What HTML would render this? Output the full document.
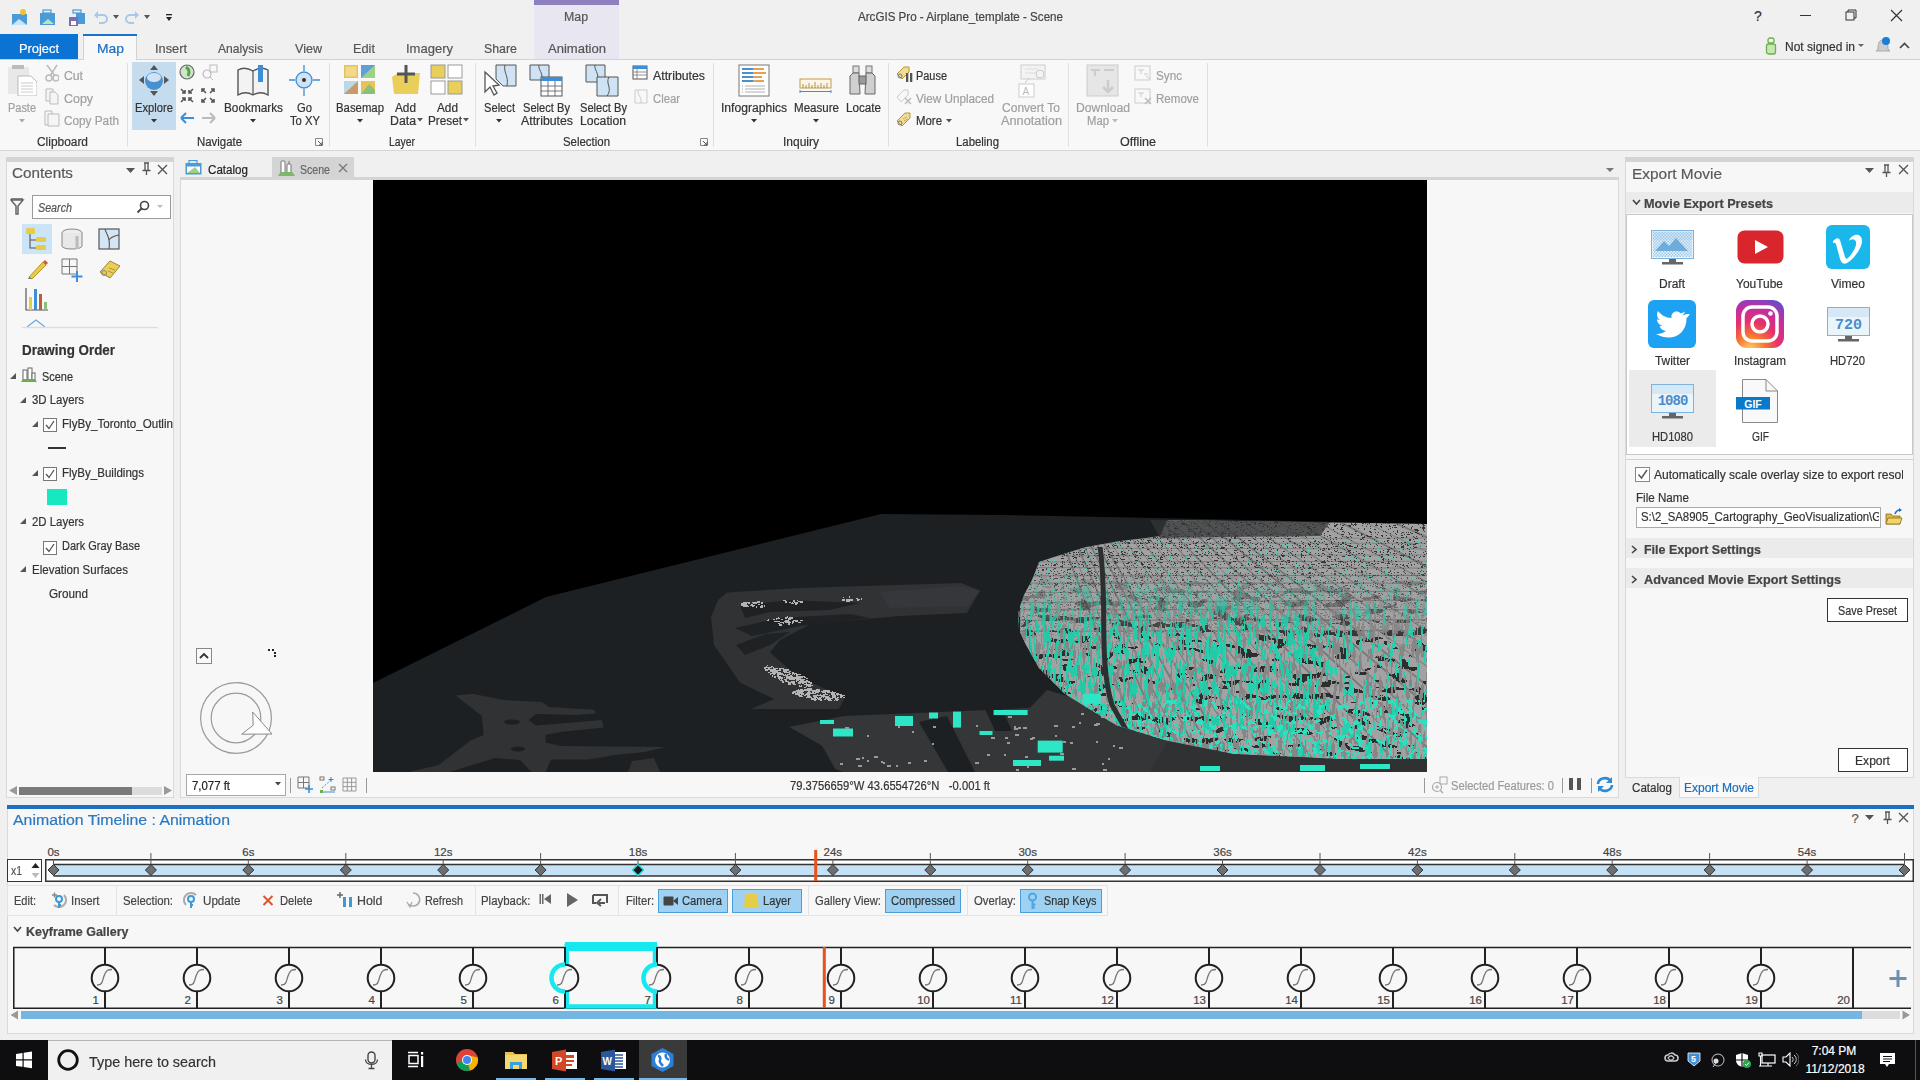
<!DOCTYPE html>
<html><head><meta charset="utf-8"><style>
html,body{margin:0;padding:0}
body{width:1920px;height:1080px;position:relative;overflow:hidden;background:#f0f0f0;font-family:"Liberation Sans",sans-serif;}
.t{position:absolute;white-space:nowrap;line-height:1;-webkit-text-stroke:0.2px currentColor;}
.r{position:absolute;}
</style></head><body>

<div class="r" style="left:0px;top:0px;width:1920px;height:59px;background:#f0f0f0;"></div>
<div class="r" style="left:534px;top:0px;width:85px;height:59px;background:#e8e6f0;"></div>
<div class="r" style="left:534px;top:0px;width:85px;height:5px;background:#8e7fbf;"></div>
<div class="t" style="left: 564px; top: 11.42px; font-size: 12.5px; color: rgb(85, 85, 85); font-weight: normal; transform-origin: 0px 0px; transform: scaleX(0.9865);">Map</div>
<div class="t" style="left: 858px; top: 10.84px; font-size: 12px; color: rgb(68, 68, 68); font-weight: normal; transform-origin: 0px 0px; transform: scaleX(0.9665);">ArcGIS Pro - Airplane_template - Scene</div>
<svg class="r" style="left:11px;top:8px;" width="18" height="18" viewBox="0 0 18 18"><rect x="1" y="6" width="15" height="11" fill="#4a9bd8"></rect><path d="M1 17 L8 11 L16 17Z" fill="#c9e4f5"></path><circle cx="12" cy="4" r="3" fill="#f2c12e"></circle></svg>
<svg class="r" style="left:39px;top:9px;" width="18" height="17" viewBox="0 0 18 17"><rect x="4" y="1" width="8" height="3" fill="none" stroke="#4a9bd8" stroke-width="1.2"></rect><rect x="1" y="4" width="15" height="12" fill="#4a9bd8"></rect><path d="M3 15 L9 10 L15 15Z" fill="#bfe3c0"></path></svg>
<svg class="r" style="left:68px;top:9px;" width="18" height="17" viewBox="0 0 18 17"><rect x="5" y="1" width="8" height="3" fill="none" stroke="#4a9bd8" stroke-width="1.2"></rect><rect x="8" y="4" width="9" height="11" fill="#4a9bd8"></rect><rect x="1" y="8" width="9" height="9" fill="#7b6fb3"></rect><rect x="3" y="12" width="5" height="4" fill="#fff"></rect></svg>
<svg class="r" style="left:93px;top:10px;" width="16" height="14" viewBox="0 0 16 14"><path d="M3 5 H10 A4 4 0 0 1 10 13 H6" fill="none" stroke="#a9c7e6" stroke-width="2"></path><path d="M1 5 L5 1 L5 9Z" fill="#a9c7e6"></path></svg>
<svg class="r" style="left:113px;top:15px;" width="7" height="5" viewBox="0 0 7 5"><path d="M0 0H6L3 4Z" fill="#555"></path></svg>
<svg class="r" style="left:124px;top:10px;" width="16" height="14" viewBox="0 0 16 14"><path d="M13 5 H6 A4 4 0 0 0 6 13 H10" fill="none" stroke="#a9c7e6" stroke-width="2"></path><path d="M15 5 L11 1 L11 9Z" fill="#a9c7e6"></path></svg>
<svg class="r" style="left:144px;top:15px;" width="7" height="5" viewBox="0 0 7 5"><path d="M0 0H6L3 4Z" fill="#555"></path></svg>
<svg class="r" style="left:165px;top:14px;" width="8" height="8" viewBox="0 0 8 8"><rect x="1" y="0" width="6" height="1.3" fill="#222"></rect><path d="M1 3H7L4 7Z" fill="#222"></path></svg>
<div class="t" style="left:1558px;width:400px;text-align:center;top:9.15px;font-size:14px;color:#333;font-weight:normal;">?</div>
<div class="r" style="left:1800px;top:15px;width:11px;height:1px;background:#333;"></div>
<svg class="r" style="left:1845px;top:9px;" width="12" height="12" viewBox="0 0 12 12"><rect x="1" y="3" width="8" height="8" fill="none" stroke="#333"></rect><path d="M3 3V1H11V9H9" fill="none" stroke="#333"></path></svg>
<svg class="r" style="left:1890px;top:9px;" width="13" height="13" viewBox="0 0 13 13"><path d="M1 1L12 12M12 1L1 12" stroke="#333" stroke-width="1.2"></path></svg>
<div class="r" style="left:0px;top:59px;width:1920px;height:1px;background:#d2d2d2;"></div>
<div class="r" style="left:0px;top:34px;width:78px;height:25px;background:#0b73d3;"></div>
<div class="t" style="left: 19px; top: 42px; font-size: 13px; color: rgb(255, 255, 255); font-weight: normal; transform-origin: 0px 0px; transform: scaleX(0.9884);">Project</div>
<div class="r" style="left:83px;top:34px;width:54px;height:26px;background:#f8f8f8;border-left:1px solid #d2d2d2;border-right:1px solid #d2d2d2;box-sizing:border-box"></div>
<div class="r" style="left:83px;top:34px;width:54px;height:2px;background:#1a73c8;"></div>
<div class="t" style="left: 97px; top: 42px; font-size: 13px; color: rgb(26, 111, 191); font-weight: normal; transform-origin: 0px 0px; transform: scaleX(1.0673);">Map</div>
<div class="t" style="left: 155px; top: 42px; font-size: 13px; color: rgb(85, 85, 85); font-weight: normal; transform-origin: 0px 0px; transform: scaleX(0.9841);">Insert</div>
<div class="t" style="left: 218px; top: 42px; font-size: 13px; color: rgb(85, 85, 85); font-weight: normal; transform-origin: 0px 0px; transform: scaleX(0.9293);">Analysis</div>
<div class="t" style="left: 295px; top: 42px; font-size: 13px; color: rgb(85, 85, 85); font-weight: normal; transform-origin: 0px 0px; transform: scaleX(0.9659);">View</div>
<div class="t" style="left: 353px; top: 42px; font-size: 13px; color: rgb(85, 85, 85); font-weight: normal; transform-origin: 0px 0px; transform: scaleX(0.9819);">Edit</div>
<div class="t" style="left: 406px; top: 42px; font-size: 13px; color: rgb(85, 85, 85); font-weight: normal; transform-origin: 0px 0px; transform: scaleX(1.0007);">Imagery</div>
<div class="t" style="left: 484px; top: 42px; font-size: 13px; color: rgb(85, 85, 85); font-weight: normal; transform-origin: 0px 0px; transform: scaleX(0.9509);">Share</div>
<div class="t" style="left: 548px; top: 42px; font-size: 13px; color: rgb(85, 85, 85); font-weight: normal; transform-origin: 0px 0px; transform: scaleX(1.0032);">Animation</div>
<svg class="r" style="left:1765px;top:37px;" width="13" height="18" viewBox="0 0 13 18"><rect x="3" y="1" width="6" height="5" rx="2" fill="none" stroke="#6ab04c" stroke-width="1.3"></rect><rect x="1.5" y="7" width="9" height="10" rx="2" fill="#c8e6b4" stroke="#6ab04c" stroke-width="1.3"></rect></svg>
<div class="t" style="left: 1785px; top: 41.42px; font-size: 12.5px; color: rgb(51, 51, 51); font-weight: normal; transform-origin: 0px 0px; transform: scaleX(0.9593);">Not signed in</div>
<svg class="r" style="left:1858px;top:44px;" width="7" height="4" viewBox="0 0 7 4"><path d="M0 0H6L3 3Z" fill="#666"></path></svg>
<svg class="r" style="left:1874px;top:36px;" width="18" height="18" viewBox="0 0 18 18"><path d="M4 13 C4 6 6 4 9 4 C12 4 14 6 14 13 L16 15 H2Z" fill="#ccc" stroke="#aaa"></path><circle cx="12" cy="5" r="4" fill="#1a7fd4"></circle></svg>
<svg class="r" style="left:1899px;top:42px;" width="11" height="7" viewBox="0 0 11 7"><path d="M1 6 L5.5 1.5 L10 6" fill="none" stroke="#444" stroke-width="1.6"></path></svg>
<div class="r" style="left:0px;top:60px;width:1920px;height:90px;background:#f8f8f8;"></div>
<div class="r" style="left:0px;top:150px;width:1920px;height:1px;background:#d6d6d6;"></div>
<div class="r" style="left:127px;top:63px;width:1px;height:84px;background:#e0e0e0;"></div>
<div class="r" style="left:329px;top:63px;width:1px;height:84px;background:#e0e0e0;"></div>
<div class="r" style="left:475px;top:63px;width:1px;height:84px;background:#e0e0e0;"></div>
<div class="r" style="left:713px;top:63px;width:1px;height:84px;background:#e0e0e0;"></div>
<div class="r" style="left:888px;top:63px;width:1px;height:84px;background:#e0e0e0;"></div>
<div class="r" style="left:1068px;top:63px;width:1px;height:84px;background:#e0e0e0;"></div>
<div class="r" style="left:1207px;top:63px;width:1px;height:84px;background:#e0e0e0;"></div>
<div class="t" style="left: 37px; top: 136.34px; font-size: 12px; color: rgb(51, 51, 51); font-weight: normal; transform-origin: 0px 0px; transform: scaleX(0.9927);">Clipboard</div>
<div class="t" style="left: 197px; top: 136.34px; font-size: 12px; color: rgb(51, 51, 51); font-weight: normal; transform-origin: 0px 0px; transform: scaleX(0.9499);">Navigate</div>
<div class="t" style="left: 389px; top: 136.34px; font-size: 12px; color: rgb(51, 51, 51); font-weight: normal; transform-origin: 0px 0px; transform: scaleX(0.8658);">Layer</div>
<div class="t" style="left: 563px; top: 136.34px; font-size: 12px; color: rgb(51, 51, 51); font-weight: normal; transform-origin: 0px 0px; transform: scaleX(0.9519);">Selection</div>
<div class="t" style="left: 783px; top: 136.34px; font-size: 12px; color: rgb(51, 51, 51); font-weight: normal; transform-origin: 0px 0px; transform: scaleX(0.9991);">Inquiry</div>
<div class="t" style="left: 956px; top: 136.34px; font-size: 12px; color: rgb(51, 51, 51); font-weight: normal; transform-origin: 0px 0px; transform: scaleX(0.9477);">Labeling</div>
<div class="t" style="left: 1120px; top: 136.34px; font-size: 12px; color: rgb(51, 51, 51); font-weight: normal; transform-origin: 0px 0px; transform: scaleX(1.0444);">Offline</div>
<svg class="r" style="left:315px;top:138px;" width="8" height="8" viewBox="0 0 8 8"><path d="M0.5 0.5H7.5V7.5H0.5Z" fill="none" stroke="#888"></path><path d="M3 3L7 7M4 7H7V4" stroke="#555" fill="none"></path></svg>
<svg class="r" style="left:700px;top:138px;" width="8" height="8" viewBox="0 0 8 8"><path d="M0.5 0.5H7.5V7.5H0.5Z" fill="none" stroke="#888"></path><path d="M3 3L7 7M4 7H7V4" stroke="#555" fill="none"></path></svg>
<svg class="r" style="left:7px;top:64px;" width="30" height="32" viewBox="0 0 30 32"><rect x="1" y="3" width="21" height="27" fill="#e8e8e8"></rect><rect x="5" y="1" width="12" height="4" fill="#bbb"></rect><path d="M11 12H24L30 18V32H11Z" fill="#fff" stroke="#bbb"></path><path d="M14 19H26M14 22H26M14 25H26M14 28H26" stroke="#ccc"></path></svg>
<div class="t" style="left: 8px; top: 101.84px; font-size: 12px; color: rgb(160, 160, 160); font-weight: normal; transform-origin: 0px 0px; transform: scaleX(0.9124);">Paste</div>
<svg class="r" style="left:19px;top:119px;" width="7" height="4" viewBox="0 0 7 4"><path d="M0 0H6L3 3.5Z" fill="#aaa"></path></svg>
<svg class="r" style="left:45px;top:64px;" width="14" height="18" viewBox="0 0 14 18"><circle cx="4" cy="14" r="3" fill="none" stroke="#bbb" stroke-width="1.5"></circle><circle cx="11" cy="14" r="3" fill="none" stroke="#bbb" stroke-width="1.5"></circle><path d="M2 1 L10 12 M12 1 L5 12" stroke="#bbb" stroke-width="1.5"></path></svg>
<div class="t" style="left: 64px; top: 69.84px; font-size: 12px; color: rgb(160, 160, 160); font-weight: normal; transform-origin: 0px 0px; transform: scaleX(1.0167);">Cut</div>
<svg class="r" style="left:45px;top:88px;" width="14" height="17" viewBox="0 0 14 17"><path d="M1 1H8V13H1Z" fill="#f5f5f5" stroke="#bbb"></path><path d="M5 4H10L13 7V16H5Z" fill="#f5f5f5" stroke="#bbb"></path></svg>
<div class="t" style="left: 64px; top: 92.84px; font-size: 12px; color: rgb(160, 160, 160); font-weight: normal; transform-origin: 0px 0px; transform: scaleX(1.0351);">Copy</div>
<svg class="r" style="left:44px;top:110px;" width="16" height="17" viewBox="0 0 16 17"><path d="M1 1H8V15H1Z" fill="#f5f5f5" stroke="#bbb"></path><path d="M4 4H15V16H4Z" fill="#f5f5f5" stroke="#bbb"></path></svg>
<div class="t" style="left: 64px; top: 114.84px; font-size: 12px; color: rgb(160, 160, 160); font-weight: normal; transform-origin: 0px 0px; transform: scaleX(0.9813);">Copy Path</div>
<div class="r" style="left:132px;top:62px;width:44px;height:68px;background:#c5dcef;"></div>
<svg class="r" style="left:138px;top:64px;" width="32" height="33" viewBox="0 0 32 33"><path d="M16 1L20 6H12Z M16 32L20 27H12Z M1 16L6 12V20Z M31 16L26 12V20Z" fill="#555"></path><ellipse cx="16" cy="17" rx="9" ry="9" fill="#4a90d0"></ellipse><ellipse cx="16" cy="13.5" rx="7" ry="4.5" fill="#cfe3f5"></ellipse></svg>
<div class="t" style="left: 135px; top: 101.84px; font-size: 12px; color: rgb(51, 51, 51); font-weight: normal; transform-origin: 0px 0px; transform: scaleX(0.9339);">Explore</div>
<svg class="r" style="left:151px;top:119px;" width="7" height="4" viewBox="0 0 7 4"><path d="M0 0H6L3 3.5Z" fill="#333"></path></svg>
<svg class="r" style="left:179px;top:64px;" width="18" height="17" viewBox="0 0 18 17"><circle cx="8" cy="8" r="7" fill="#cde8c8" stroke="#666" stroke-width="1.2"></circle><path d="M7 3 C10 5 11 8 9 12" stroke="#5aa04a" stroke-width="3" fill="none"></path></svg>
<svg class="r" style="left:200px;top:64px;" width="18" height="17" viewBox="0 0 18 17"><circle cx="7" cy="10" r="4" fill="none" stroke="#bbb" stroke-width="1.2"></circle><path d="M10 13L13 16" stroke="#bbb"></path><rect x="10" y="1" width="7" height="7" fill="none" stroke="#bbb"></rect></svg>
<svg class="r" style="left:179px;top:87px;" width="40" height="17" viewBox="0 0 40 17"><path d="M2 2L6 6M6 3V6H3 M14 2L10 6M10 3V6H13 M2 15L6 11M3 11H6V14 M14 15L10 11M13 11H10V14" stroke="#555" stroke-width="1.6" fill="none"></path><g transform="translate(21,0)"><path d="M6 6L2 2M2 5V2H5 M10 6L14 2M11 2H14V5 M6 11L2 15M2 12V15H5 M10 11L14 15M14 12V15H11" stroke="#555" stroke-width="1.6" fill="none"></path></g></svg>
<svg class="r" style="left:179px;top:111px;" width="40" height="14" viewBox="0 0 40 14"><path d="M2 7H15M2 7L7 2M2 7L7 12" stroke="#3c8fd6" stroke-width="2" fill="none"></path><path d="M23 7H36M36 7L31 2M36 7L31 12" stroke="#bbb" stroke-width="2" fill="none"></path></svg>
<svg class="r" style="left:236px;top:64px;" width="34" height="32" viewBox="0 0 34 32"><path d="M2 6 C7 3 12 4 17 7 C22 4 27 3 32 6 V31 C27 28 22 28 17 31 C12 28 7 28 2 31Z" fill="#f3f3f3" stroke="#555" stroke-width="1.4"></path><path d="M17 7V31" stroke="#555" stroke-width="1.2"></path><rect x="22" y="1" width="5" height="17" fill="#3c8fd6"></rect></svg>
<div class="t" style="left: 224px; top: 101.84px; font-size: 12px; color: rgb(51, 51, 51); font-weight: normal; transform-origin: 0px 0px; transform: scaleX(0.9828);">Bookmarks</div>
<svg class="r" style="left:250px;top:119px;" width="7" height="4" viewBox="0 0 7 4"><path d="M0 0H6L3 3.5Z" fill="#333"></path></svg>
<svg class="r" style="left:288px;top:64px;" width="33" height="33" viewBox="0 0 33 33"><circle cx="16" cy="16" r="8" fill="#cfe3f5" stroke="#3c8fd6" stroke-width="1.3"></circle><circle cx="16" cy="16" r="2" fill="#333"></circle><path d="M16 1V7M16 25V32M1 16H7M25 16H32" stroke="#3c8fd6" stroke-width="1.3"></path></svg>
<div class="t" style="left: 297px; top: 101.84px; font-size: 12px; color: rgb(51, 51, 51); font-weight: normal; transform-origin: 0px 0px; transform: scaleX(0.9366);">Go</div>
<div class="t" style="left: 290px; top: 114.84px; font-size: 12px; color: rgb(51, 51, 51); font-weight: normal; transform-origin: 0px 0px; transform: scaleX(0.937);">To XY</div>
<svg class="r" style="left:343px;top:64px;" width="34" height="32" viewBox="0 0 34 32"><rect x="1" y="1" width="14" height="13" fill="#e6c25c"></rect><rect x="2.5" y="2.5" width="11" height="10" fill="#f2d98a"></rect><rect x="18" y="1" width="14" height="13" fill="#5e9fd6"></rect><path d="M18 14 L32 1 V14Z" fill="#9fd08a"></path><rect x="1" y="17" width="14" height="13" fill="#c89a6a"></rect><path d="M1 17H15L1 30Z" fill="#b9d8e8"></path><rect x="18" y="17" width="14" height="13" fill="#e7c35a"></rect><path d="M18 30 L26 20 L32 26 V30Z" fill="#8cc07a"></path></svg>
<div class="t" style="left: 336px; top: 101.84px; font-size: 12px; color: rgb(51, 51, 51); font-weight: normal; transform-origin: 0px 0px; transform: scaleX(0.9467);">Basemap</div>
<svg class="r" style="left:357px;top:119px;" width="7" height="4" viewBox="0 0 7 4"><path d="M0 0H6L3 3.5Z" fill="#333"></path></svg>
<svg class="r" style="left:390px;top:64px;" width="32" height="32" viewBox="0 0 32 32"><path d="M2 13 L8 9 H30 L28 30 H4Z" fill="#e9cf5a"></path><path d="M16 1V19M7 10H25" stroke="#555" stroke-width="3"></path></svg>
<div class="t" style="left: 395px; top: 101.84px; font-size: 12px; color: rgb(51, 51, 51); font-weight: normal; transform-origin: 0px 0px; transform: scaleX(0.9832);">Add</div>
<div class="t" style="left: 390px; top: 114.84px; font-size: 12px; color: rgb(51, 51, 51); font-weight: normal; transform-origin: 0px 0px; transform: scaleX(1.0253);">Data</div>
<svg class="r" style="left:417px;top:118px;" width="7" height="4" viewBox="0 0 7 4"><path d="M0 0H6L3 3.5Z" fill="#555"></path></svg>
<svg class="r" style="left:430px;top:64px;" width="34" height="32" viewBox="0 0 34 32"><rect x="1" y="1" width="14" height="13" fill="#e9cf5a" stroke="#999"></rect><rect x="18" y="1" width="14" height="13" fill="#fff" stroke="#999"></rect><rect x="1" y="17" width="14" height="13" fill="#fff" stroke="#999"></rect><rect x="18" y="17" width="14" height="13" fill="#e9cf5a" stroke="#999"></rect></svg>
<div class="t" style="left: 437px; top: 101.84px; font-size: 12px; color: rgb(51, 51, 51); font-weight: normal; transform-origin: 0px 0px; transform: scaleX(0.9832);">Add</div>
<div class="t" style="left: 428px; top: 114.84px; font-size: 12px; color: rgb(51, 51, 51); font-weight: normal; transform-origin: 0px 0px; transform: scaleX(0.9802);">Preset</div>
<svg class="r" style="left:463px;top:118px;" width="7" height="4" viewBox="0 0 7 4"><path d="M0 0H6L3 3.5Z" fill="#555"></path></svg>
<svg class="r" style="left:483px;top:64px;" width="34" height="33" viewBox="0 0 34 33"><path d="M13 1H33V22H20 L13 15Z" fill="#cfe3f5" stroke="#555"></path><path d="M22 1 C20 8 26 12 24 22" stroke="#555" fill="none"></path><path d="M2 8 L2 28 L7 23 L11 31 L14 29 L10 22 L16 21Z" fill="#fff" stroke="#555" stroke-width="1.3"></path></svg>
<div class="t" style="left: 484px; top: 101.84px; font-size: 12px; color: rgb(51, 51, 51); font-weight: normal; transform-origin: 0px 0px; transform: scaleX(0.9293);">Select</div>
<svg class="r" style="left:496px;top:119px;" width="7" height="4" viewBox="0 0 7 4"><path d="M0 0H6L3 3.5Z" fill="#333"></path></svg>
<svg class="r" style="left:529px;top:64px;" width="34" height="33" viewBox="0 0 34 33"><path d="M1 1H20V16H1Z" fill="#cfe3f5" stroke="#555"></path><path d="M10 1 C9 6 14 8 13 16" stroke="#555" fill="none"></path><rect x="12" y="13" width="21" height="19" fill="#fff" stroke="#555"></rect><rect x="12" y="13" width="21" height="4" fill="#3c8fd6"></rect><path d="M12 22H33M12 27H33M19 17V32M26 17V32" stroke="#555" stroke-width="0.8"></path></svg>
<div class="t" style="left: 523px; top: 101.84px; font-size: 12px; color: rgb(51, 51, 51); font-weight: normal; transform-origin: 0px 0px; transform: scaleX(0.927);">Select By</div>
<div class="t" style="left: 521px; top: 114.84px; font-size: 12px; color: rgb(51, 51, 51); font-weight: normal; transform-origin: 0px 0px; transform: scaleX(1.0256);">Attributes</div>
<svg class="r" style="left:585px;top:64px;" width="34" height="33" viewBox="0 0 34 33"><path d="M1 1H20V18H1Z" fill="#cfe3f5" stroke="#555"></path><path d="M10 1 C9 6 14 8 13 18" stroke="#555" fill="none"></path><path d="M12 13H33V32H12Z" fill="#cfe3f5" stroke="#555"></path><path d="M24 13 C20 20 28 24 22 32" stroke="#555" fill="none"></path></svg>
<div class="t" style="left: 580px; top: 101.84px; font-size: 12px; color: rgb(51, 51, 51); font-weight: normal; transform-origin: 0px 0px; transform: scaleX(0.927);">Select By</div>
<div class="t" style="left: 580px; top: 114.84px; font-size: 12px; color: rgb(51, 51, 51); font-weight: normal; transform-origin: 0px 0px; transform: scaleX(1.0138);">Location</div>
<svg class="r" style="left:632px;top:65px;" width="17" height="16" viewBox="0 0 17 16"><rect x="1" y="1" width="14" height="13" fill="#fff" stroke="#555"></rect><rect x="1" y="1" width="14" height="3" fill="#3c8fd6"></rect><path d="M1 7H15M1 10H15M5 4V14" stroke="#777" stroke-width="0.8"></path></svg>
<div class="t" style="left: 653px; top: 69.84px; font-size: 12px; color: rgb(51, 51, 51); font-weight: normal; transform-origin: 0px 0px; transform: scaleX(1.0256);">Attributes</div>
<svg class="r" style="left:634px;top:89px;" width="15" height="16" viewBox="0 0 15 16"><path d="M1 1H13V14H1Z" fill="none" stroke="#ccc"></path><path d="M4 1 C3 6 8 8 7 14" stroke="#ccc" fill="none"></path></svg>
<div class="t" style="left: 653px; top: 92.84px; font-size: 12px; color: rgb(160, 160, 160); font-weight: normal; transform-origin: 0px 0px; transform: scaleX(0.9412);">Clear</div>
<svg class="r" style="left:738px;top:64px;" width="32" height="33" viewBox="0 0 32 33"><rect x="1" y="1" width="30" height="31" fill="#fff" stroke="#777"></rect><path d="M4 5H15M4 9H15M4 13H15M4 17H15" stroke="#4a90d0" stroke-width="2.2"></path><path d="M15 5H26M15 9H28M15 13H24M15 17H26" stroke="#e8a050" stroke-width="2.2"></path><path d="M7 22H27M7 25H27M7 28H27" stroke="#999" stroke-width="0.8"></path><path d="M4 22H5M4 25H5M4 28H5" stroke="#999"></path></svg>
<div class="t" style="left: 721px; top: 101.84px; font-size: 12px; color: rgb(51, 51, 51); font-weight: normal; transform-origin: 0px 0px; transform: scaleX(1.0096);">Infographics</div>
<svg class="r" style="left:751px;top:119px;" width="7" height="4" viewBox="0 0 7 4"><path d="M0 0H6L3 3.5Z" fill="#333"></path></svg>
<svg class="r" style="left:799px;top:78px;" width="33" height="16" viewBox="0 0 33 16"><rect x="1" y="1" width="31" height="9" fill="#fbf6e6" stroke="#c49a4a"></rect><path d="M4 10V6M7 10V7M10 10V5M13 10V7M16 10V4M19 10V7M22 10V5M25 10V7M28 10V5" stroke="#a07a30" stroke-width="0.8"></path><path d="M1 13.5H32M1 12V15M32 12V15" stroke="#3c8fd6"></path></svg>
<div class="t" style="left: 794px; top: 101.84px; font-size: 12px; color: rgb(51, 51, 51); font-weight: normal; transform-origin: 0px 0px; transform: scaleX(0.9639);">Measure</div>
<svg class="r" style="left:813px;top:119px;" width="7" height="4" viewBox="0 0 7 4"><path d="M0 0H6L3 3.5Z" fill="#333"></path></svg>
<svg class="r" style="left:848px;top:65px;" width="30" height="31" viewBox="0 0 30 31"><rect x="5" y="1" width="6" height="7" fill="#ddd" stroke="#777"></rect><rect x="18" y="1" width="6" height="7" fill="#ddd" stroke="#777"></rect><path d="M2 11 L5 8 H11 L12 29 H2Z M27 11 L24 8 H18 L17 29 H27Z" fill="#cfcfcf" stroke="#666"></path><rect x="11" y="11" width="7" height="8" fill="#999" stroke="#666"></rect></svg>
<div class="t" style="left: 846px; top: 101.84px; font-size: 12px; color: rgb(51, 51, 51); font-weight: normal; transform-origin: 0px 0px; transform: scaleX(0.9714);">Locate</div>
<svg class="r" style="left:895px;top:65px;" width="19" height="18" viewBox="0 0 19 18"><path d="M2 9 L9 2 H14 V7 L7 14Z" fill="#f1dc9a" stroke="#b8962e"></path><circle cx="5" cy="11" r="2" fill="none" stroke="#777"></circle><rect x="11" y="8" width="2.3" height="9" fill="#555"></rect><rect x="15" y="8" width="2.3" height="9" fill="#555"></rect></svg>
<div class="t" style="left: 916px; top: 69.84px; font-size: 12px; color: rgb(51, 51, 51); font-weight: normal; transform-origin: 0px 0px; transform: scaleX(0.9109);">Pause</div>
<svg class="r" style="left:895px;top:88px;" width="18" height="18" viewBox="0 0 18 18"><path d="M2 9 L9 2 H13 V7 L6 14Z" fill="none" stroke="#ccc"></path><path d="M10 10L16 16M16 10L10 16" stroke="#bbb" stroke-width="1.5"></path></svg>
<div class="t" style="left: 916px; top: 92.84px; font-size: 12px; color: rgb(160, 160, 160); font-weight: normal; transform-origin: 0px 0px; transform: scaleX(0.9771);">View Unplaced</div>
<svg class="r" style="left:895px;top:111px;" width="18" height="17" viewBox="0 0 18 17"><path d="M2 10 L10 2 H15 V7 L7 15Z" fill="#f1dc9a" stroke="#b8962e"></path><circle cx="5" cy="12" r="2" fill="none" stroke="#777"></circle><path d="M8 8L12 6M9 10L13 8" stroke="#b8962e" stroke-width="0.7"></path></svg>
<div class="t" style="left: 916px; top: 114.84px; font-size: 12px; color: rgb(51, 51, 51); font-weight: normal; transform-origin: 0px 0px; transform: scaleX(0.9509);">More</div>
<svg class="r" style="left:946px;top:119px;" width="7" height="4" viewBox="0 0 7 4"><path d="M0 0H6L3 3.5Z" fill="#555"></path></svg>
<svg class="r" style="left:1016px;top:64px;" width="32" height="34" viewBox="0 0 32 34"><rect x="5" y="1" width="24" height="14" fill="#f3f3f3" stroke="#ccc"></rect><path d="M9 5H22M9 9H20" stroke="#ddd"></path><circle cx="24" cy="10" r="4" fill="none" stroke="#ccc"></circle><rect x="3" y="20" width="15" height="13" fill="#fff" stroke="#ccc"></rect><text x="6.5" y="31" font-size="10" fill="#bbb" font-family="Liberation Sans">A</text><path d="M9 19 L13 14" stroke="#ccc"></path></svg>
<div class="t" style="left: 1002px; top: 101.84px; font-size: 12px; color: rgb(160, 160, 160); font-weight: normal; transform-origin: 0px 0px; transform: scaleX(1.0032);">Convert To</div>
<div class="t" style="left: 1001px; top: 114.84px; font-size: 12px; color: rgb(160, 160, 160); font-weight: normal; transform-origin: 0px 0px; transform: scaleX(1.0629);">Annotation</div>
<svg class="r" style="left:1086px;top:64px;" width="33" height="33" viewBox="0 0 33 33"><rect x="1" y="1" width="31" height="31" fill="#e6e6e6" stroke="#ccc"></rect><path d="M5 6H14M9 6V12M18 6H28" stroke="#ccc" stroke-width="2"></path><path d="M22 16V28M17 23L22 28L27 23" stroke="#ccc" stroke-width="2.5" fill="none"></path></svg>
<div class="t" style="left: 1076px; top: 101.84px; font-size: 12px; color: rgb(160, 160, 160); font-weight: normal; transform-origin: 0px 0px; transform: scaleX(1.0117);">Download</div>
<div class="t" style="left: 1087px; top: 114.84px; font-size: 12px; color: rgb(160, 160, 160); font-weight: normal; transform-origin: 0px 0px; transform: scaleX(0.9424);">Map</div>
<svg class="r" style="left:1112px;top:119px;" width="7" height="4" viewBox="0 0 7 4"><path d="M0 0H6L3 3.5Z" fill="#bbb"></path></svg>
<svg class="r" style="left:1134px;top:65px;" width="19" height="17" viewBox="0 0 19 17"><rect x="1" y="1" width="15" height="14" fill="none" stroke="#ccc"></rect><path d="M4 5H10M7 5V9M10 9H14" stroke="#ccc"></path><path d="M12 11 L16 14" stroke="#ccc"></path></svg>
<div class="t" style="left: 1156px; top: 69.84px; font-size: 12px; color: rgb(160, 160, 160); font-weight: normal; transform-origin: 0px 0px; transform: scaleX(0.9742);">Sync</div>
<svg class="r" style="left:1134px;top:88px;" width="19" height="17" viewBox="0 0 19 17"><rect x="1" y="1" width="15" height="14" fill="none" stroke="#ccc"></rect><path d="M4 5H10M7 5V9" stroke="#ccc"></path><path d="M11 10L17 16M17 10L11 16" stroke="#bbb" stroke-width="1.4"></path></svg>
<div class="t" style="left: 1156px; top: 92.84px; font-size: 12px; color: rgb(160, 160, 160); font-weight: normal; transform-origin: 0px 0px; transform: scaleX(0.9622);">Remove</div>
<div class="r" style="left:6px;top:157px;width:168px;height:641px;background:#f7f7f7;border:1px solid #d9d9d9;box-sizing:border-box"></div>
<div class="r" style="left:6px;top:157px;width:168px;height:5px;background:#d4d4d4;"></div>
<div class="t" style="left: 12px; top: 166.23px; font-size: 14.5px; color: rgb(89, 89, 89); font-weight: normal; transform-origin: 0px 0px; transform: scaleX(1.0509);">Contents</div>
<svg class="r" style="left:126px;top:168px;" width="10" height="6" viewBox="0 0 10 6"><path d="M0 0H9L4.5 5Z" fill="#555"></path></svg>
<svg class="r" style="left:141px;top:162px;" width="11" height="14" viewBox="0 0 11 14"><path d="M3 1H8M4 1V8M7 1V8M1.5 8.5H9.5M5.5 8.5V13" stroke="#555" stroke-width="1.3" fill="none"></path></svg>
<svg class="r" style="left:157px;top:164px;" width="11" height="11" viewBox="0 0 11 11"><path d="M1 1L10 10M10 1L1 10" stroke="#555" stroke-width="1.4"></path></svg>
<svg class="r" style="left:10px;top:198px;" width="15" height="18" viewBox="0 0 15 18"><path d="M1 2H13L8 8V16H6V8Z" fill="none" stroke="#666" stroke-width="1.5"></path><path d="M1 1H13" stroke="#666" stroke-width="1.6"></path></svg>
<div class="r" style="left:32px;top:195px;width:139px;height:24px;background:#ffffff;border:1px solid #9a9a9a;box-sizing:border-box"></div>
<div class="t" style="left: 38px; top: 202.42px; font-size: 12.5px; color: rgb(85, 85, 85); font-weight: normal; transform-origin: 0px 0px; font-style: italic; transform: scaleX(0.8584);">Search</div>
<svg class="r" style="left:136px;top:200px;" width="14" height="14" viewBox="0 0 14 14"><circle cx="8.5" cy="5.5" r="4" fill="none" stroke="#444" stroke-width="1.6"></circle><path d="M6 8L1.5 12.5" stroke="#444" stroke-width="1.8"></path></svg>
<svg class="r" style="left:157px;top:205px;" width="7" height="4" viewBox="0 0 7 4"><path d="M0 0H6L3 3Z" fill="#bbb"></path></svg>
<div class="r" style="left:22px;top:224px;width:30px;height:30px;background:#cce4f7;"></div>
<svg class="r" style="left:25px;top:227px;" width="24" height="25" viewBox="0 0 24 25"><rect x="1" y="1" width="9" height="6" rx="1.5" fill="#e5cd4a"></rect><rect x="11" y="10" width="10" height="5" rx="1.5" fill="#e5cd4a"></rect><rect x="11" y="18" width="10" height="5" rx="1.5" fill="#e5cd4a"></rect><path d="M5 7V21H11M5 13H11" stroke="#555" stroke-width="1.1" fill="none"></path></svg>
<svg class="r" style="left:61px;top:228px;" width="23" height="23" viewBox="0 0 23 23"><ellipse cx="11" cy="5" rx="10" ry="4" fill="#eee" stroke="#888"></ellipse><path d="M1 5V18 C1 22 21 22 21 18 V5" fill="#e8e8e8" stroke="#888"></path><path d="M16 8V21" stroke="#bbb" stroke-width="3"></path></svg>
<svg class="r" style="left:98px;top:228px;" width="23" height="23" viewBox="0 0 23 23"><rect x="1" y="1" width="20" height="20" fill="#d4e6f5" stroke="#555" stroke-width="1.2"></rect><path d="M7 1 C8 6 13 9 11 21 M11 12 C14 8 18 8 21 7" stroke="#555" fill="none" stroke-width="1.1"></path></svg>
<svg class="r" style="left:26px;top:258px;" width="22" height="22" viewBox="0 0 22 22"><path d="M3 19 L17 4 L20 7 L6 21Z" fill="#e5cd4a" stroke="#b8942a"></path><path d="M3 19L2 21L6 21" fill="#777"></path><path d="M17 4L19 2L22 5L20 7Z" fill="#d05a3a"></path></svg>
<svg class="r" style="left:61px;top:258px;" width="25" height="25" viewBox="0 0 25 25"><path d="M1 1H16V16H1Z M1 8.5H16 M8.5 1V16" fill="none" stroke="#777" stroke-width="1"></path><path d="M16 13V24M10.5 18.5H21.5" stroke="#3c8fd6" stroke-width="2"></path></svg>
<svg class="r" style="left:98px;top:258px;" width="24" height="23" viewBox="0 0 24 23"><path d="M2 14 L12 3 L22 8 L12 20Z" fill="#e9cf5a" stroke="#a0842a"></path><circle cx="6" cy="15" r="2.5" fill="none" stroke="#888"></circle><path d="M11 10L17 12M10 13L15 15" stroke="#a0842a" stroke-width="0.8"></path></svg>
<svg class="r" style="left:25px;top:287px;" width="24" height="24" viewBox="0 0 24 24"><path d="M1 1V23H23" fill="none" stroke="#555" stroke-width="1.2"></path><rect x="4" y="10" width="3" height="13" fill="#e5cd4a"></rect><rect x="9" y="2" width="3" height="21" fill="#3c8fd6"></rect><rect x="14" y="7" width="3" height="16" fill="#c45a3a"></rect><rect x="19" y="15" width="3" height="8" fill="#8cc07a"></rect></svg>
<svg class="r" style="left:22px;top:318px;" width="140" height="12" viewBox="0 0 140 12"><path d="M5 9 L14 2 L23 9" fill="none" stroke="#6aa7dd" stroke-width="1.2"></path><path d="M0 9.5H136" stroke="#ddd" stroke-width="1.5"></path></svg>
<div class="t" style="left: 22px; top: 343.15px; font-size: 14px; color: rgb(51, 51, 51); font-weight: bold; transform-origin: 0px 0px; transform: scaleX(0.9563);">Drawing Order</div>
<svg class="r" style="left:10px;top:373px;" width="7" height="7" viewBox="0 0 7 7"><path d="M6 0V6H0Z" fill="#555"></path></svg>
<svg class="r" style="left:21px;top:367px;" width="16" height="16" viewBox="0 0 16 16"><rect x="2" y="3" width="4" height="11" fill="#fff" stroke="#666"></rect><rect x="7" y="1" width="4" height="13" fill="#fff" stroke="#666"></rect><rect x="11" y="6" width="3" height="8" fill="#fff" stroke="#666"></rect><path d="M0 15H16L14 12H2Z" fill="#6ab04c"></path></svg>
<div class="t" style="left: 42px; top: 371.42px; font-size: 12.5px; color: rgb(51, 51, 51); font-weight: normal; transform-origin: 0px 0px; transform: scaleX(0.8744);">Scene</div>
<svg class="r" style="left:20px;top:397px;" width="7" height="7" viewBox="0 0 7 7"><path d="M6 0V6H0Z" fill="#555"></path></svg>
<div class="t" style="left: 32px; top: 394.42px; font-size: 12.5px; color: rgb(51, 51, 51); font-weight: normal; transform-origin: 0px 0px; transform: scaleX(0.9125);">3D Layers</div>
<svg class="r" style="left:32px;top:421px;" width="7" height="7" viewBox="0 0 7 7"><path d="M6 0V6H0Z" fill="#555"></path></svg>
<svg class="r" style="left:43px;top:418px;" width="15" height="15" viewBox="0 0 15 15"><rect x="0.5" y="0.5" width="13" height="13" fill="#fff" stroke="#777"></rect><path d="M3 7 L6 10.5 L11 3" fill="none" stroke="#555" stroke-width="1.3"></path></svg>
<div class="t" style="left: 62px; top: 418.42px; font-size: 12.5px; color: rgb(51, 51, 51); font-weight: normal; transform-origin: 0px 0px; transform: scaleX(0.9287);">FlyBy_Toronto_Outlin</div>
<div class="r" style="left:48px;top:447px;width:18px;height:2px;background:#333;"></div>
<svg class="r" style="left:32px;top:470px;" width="7" height="7" viewBox="0 0 7 7"><path d="M6 0V6H0Z" fill="#555"></path></svg>
<svg class="r" style="left:43px;top:467px;" width="15" height="15" viewBox="0 0 15 15"><rect x="0.5" y="0.5" width="13" height="13" fill="#fff" stroke="#777"></rect><path d="M3 7 L6 10.5 L11 3" fill="none" stroke="#555" stroke-width="1.3"></path></svg>
<div class="t" style="left: 62px; top: 467.42px; font-size: 12.5px; color: rgb(51, 51, 51); font-weight: normal; transform-origin: 0px 0px; transform: scaleX(0.922);">FlyBy_Buildings</div>
<div class="r" style="left:47px;top:489px;width:20px;height:16px;background:#17e8c0;"></div>
<svg class="r" style="left:20px;top:518px;" width="7" height="7" viewBox="0 0 7 7"><path d="M6 0V6H0Z" fill="#555"></path></svg>
<div class="t" style="left: 32px; top: 516.42px; font-size: 12.5px; color: rgb(51, 51, 51); font-weight: normal; transform-origin: 0px 0px; transform: scaleX(0.9125);">2D Layers</div>
<svg class="r" style="left:43px;top:541px;" width="15" height="15" viewBox="0 0 15 15"><rect x="0.5" y="0.5" width="13" height="13" fill="#fff" stroke="#777"></rect><path d="M3 7 L6 10.5 L11 3" fill="none" stroke="#555" stroke-width="1.3"></path></svg>
<div class="t" style="left: 62px; top: 540.42px; font-size: 12.5px; color: rgb(51, 51, 51); font-weight: normal; transform-origin: 0px 0px; transform: scaleX(0.8772);">Dark Gray Base</div>
<svg class="r" style="left:20px;top:566px;" width="7" height="7" viewBox="0 0 7 7"><path d="M6 0V6H0Z" fill="#555"></path></svg>
<div class="t" style="left: 32px; top: 564.42px; font-size: 12.5px; color: rgb(51, 51, 51); font-weight: normal; transform-origin: 0px 0px; transform: scaleX(0.921);">Elevation Surfaces</div>
<div class="t" style="left: 49px; top: 588.42px; font-size: 12.5px; color: rgb(51, 51, 51); font-weight: normal; transform-origin: 0px 0px; transform: scaleX(0.9352);">Ground</div>
<svg class="r" style="left:9px;top:786px;" width="9" height="10" viewBox="0 0 9 10"><path d="M8 0V9L0 4.5Z" fill="#999"></path></svg>
<div class="r" style="left:19px;top:787px;width:143px;height:8px;background:#dcdcdc;"></div>
<div class="r" style="left:19px;top:787px;width:113px;height:8px;background:#7a7a7a;"></div>
<svg class="r" style="left:164px;top:786px;" width="9" height="10" viewBox="0 0 9 10"><path d="M0 0V9L8 4.5Z" fill="#999"></path></svg>
<svg class="r" style="left:185px;top:160px;" width="17" height="15" viewBox="0 0 17 15"><rect x="4" y="0.5" width="8" height="3" fill="none" stroke="#4a9bd8" stroke-width="1.2"></rect><rect x="0.5" y="3" width="16" height="11.5" fill="#4a9bd8"></rect><rect x="2" y="6" width="13" height="7" fill="#fff"></rect><path d="M2 13 L10 7 L15 13Z" fill="#9fd08a"></path><path d="M2 6H15" stroke="#4a9bd8"></path></svg>
<div class="t" style="left: 208px; top: 163.62px; font-size: 12.5px; color: rgb(34, 34, 34); font-weight: normal; transform-origin: 0px 0px; transform: scaleX(0.9282);">Catalog</div>
<div class="r" style="left:272px;top:157px;width:82px;height:20px;background:#d4d4d4;"></div>
<svg class="r" style="left:278px;top:160px;" width="17" height="17" viewBox="0 0 17 17"><rect x="3" y="1" width="4" height="13" rx="1" fill="#fff" stroke="#777"></rect><rect x="9" y="4" width="4" height="10" rx="1" fill="#fff" stroke="#777"></rect><path d="M11 1V4" stroke="#777"></path><path d="M0 16H17L14.5 12H2.5Z" fill="#7cb86a"></path></svg>
<div class="t" style="left: 300px; top: 163.62px; font-size: 12.5px; color: rgb(102, 102, 102); font-weight: normal; transform-origin: 0px 0px; transform: scaleX(0.8462);">Scene</div>
<svg class="r" style="left:338px;top:163px;" width="10" height="10" viewBox="0 0 10 10"><path d="M1 1L9 9M9 1L1 9" stroke="#777" stroke-width="1.3"></path></svg>
<svg class="r" style="left:1606px;top:168px;" width="9" height="5" viewBox="0 0 9 5"><path d="M0 0H8L4 4Z" fill="#777"></path></svg>
<div class="r" style="left:180px;top:177px;width:1439px;height:3px;background:#d4d4d4;"></div>
<div class="r" style="left:180px;top:180px;width:1439px;height:618px;background:#f7f7f7;border:1px solid #d9d9d9;border-top:none;box-sizing:border-box"></div>
<svg class="r" style="left:195px;top:647px;" width="18" height="18" viewBox="0 0 18 18"><rect x="1.5" y="1.5" width="15" height="15" fill="#f9f9f9" stroke="#888"></rect><path d="M5 11 L9 7 L13 11" stroke="#333" stroke-width="1.8" fill="none"></path></svg>
<svg class="r" style="left:266px;top:647px;" width="12" height="11" viewBox="0 0 12 11"><rect x="2" y="2" width="2" height="2" fill="#222"></rect><rect x="6" y="2" width="2" height="2" fill="#222"></rect><rect x="8" y="5" width="2" height="2" fill="#222"></rect><rect x="8" y="8" width="2" height="2" fill="#222"></rect></svg>
<svg class="r" style="left:196px;top:678px;" width="80" height="80" viewBox="0 0 80 80"><circle cx="40" cy="40" r="35.4" fill="#f7f7f7" stroke="#9a9a9a" stroke-width="1.2"></circle><circle cx="40" cy="40" r="24.8" fill="#f7f7f7" stroke="#9a9a9a" stroke-width="1.2"></circle><path d="M56.7 34 L76 56 L45.7 56.2 L57.2 47.2Z" fill="#fdfdfd" stroke="#8a8a8a" stroke-width="1"></path></svg>
<div class="r" style="left:186px;top:774px;width:100px;height:22px;background:#fff;border:1px solid #a8a8a8;box-sizing:border-box"></div>
<div class="t" style="left: 192px; top: 780.22px; font-size: 12.5px; color: rgb(34, 34, 34); font-weight: normal; transform-origin: 0px 0px; transform: scaleX(0.9112);">7,077 ft</div>
<svg class="r" style="left:275px;top:782px;" width="7" height="4" viewBox="0 0 7 4"><path d="M0 0H6L3 3.5Z" fill="#444"></path></svg>
<div class="r" style="left:290px;top:778px;width:1px;height:15px;background:#999;"></div>
<svg class="r" style="left:297px;top:776px;" width="18" height="18" viewBox="0 0 18 18"><path d="M1 1H12V12H1Z M1 6.5H12 M6.5 1V12" fill="none" stroke="#777"></path><path d="M12 9V17M8 13H16" stroke="#3c8fd6" stroke-width="1.6"></path></svg>
<svg class="r" style="left:319px;top:776px;" width="18" height="18" viewBox="0 0 18 18"><rect x="1" y="1" width="4" height="3" fill="none" stroke="#777"></rect><rect x="12" y="11" width="4" height="3" fill="none" stroke="#777"></rect><path d="M12 1V6M9.5 3.5H14.5" stroke="#777"></path><path d="M3 12L12 4" stroke="#3c8fd6" stroke-dasharray="2 1.5"></path><rect x="1" y="14" width="3" height="3" fill="#6ab04c"></rect><path d="M4 16H16" stroke="#3c8fd6"></path></svg>
<svg class="r" style="left:342px;top:777px;" width="15" height="15" viewBox="0 0 15 15"><path d="M1 1H14V14H1Z M1 5.3H14 M1 9.6H14 M5.3 1V14 M9.6 1V14" fill="none" stroke="#999"></path></svg>
<div class="r" style="left:366px;top:778px;width:1px;height:15px;background:#999;"></div>
<div class="t" style="left: 790px; top: 780.42px; font-size: 12.5px; color: rgb(51, 51, 51); font-weight: normal; transform-origin: 0px 0px; transform: scaleX(0.8982);">79.3756659°W 43.6554726°N &nbsp;&nbsp;-0.001 ft</div>
<div class="r" style="left:1424px;top:778px;width:1px;height:15px;background:#999;"></div>
<svg class="r" style="left:1431px;top:776px;" width="17" height="18" viewBox="0 0 17 18"><circle cx="6" cy="11" r="4.5" fill="none" stroke="#aaa" stroke-width="1.2"></circle><path d="M4 11H8M6 9V13" stroke="#aaa"></path><path d="M9 14L12 17" stroke="#aaa" stroke-width="1.5"></path><rect x="9" y="1" width="7" height="7" fill="none" stroke="#aaa"></rect></svg>
<div class="t" style="left: 1451px; top: 780.42px; font-size: 12.5px; color: rgb(154, 154, 154); font-weight: normal; transform-origin: 0px 0px; transform: scaleX(0.8929);">Selected Features: 0</div>
<div class="r" style="left:1562px;top:778px;width:1px;height:15px;background:#999;"></div>
<div class="r" style="left:1569px;top:778px;width:4px;height:12px;background:#555;"></div>
<div class="r" style="left:1577px;top:778px;width:4px;height:12px;background:#555;"></div>
<div class="r" style="left:1591px;top:778px;width:1px;height:15px;background:#999;"></div>
<svg class="r" style="left:1596px;top:776px;" width="18" height="17" viewBox="0 0 18 17"><path d="M2 8 A7 6 0 0 1 14 4" fill="none" stroke="#2e8ad6" stroke-width="2.6"></path><path d="M16 1V7H10Z" fill="#2e8ad6"></path><path d="M16 9 A7 6 0 0 1 4 13" fill="none" stroke="#2e8ad6" stroke-width="2.6"></path><path d="M2 16V10H8Z" fill="#2e8ad6"></path></svg>
<svg class="r" style="left:373px;top:180px;" width="1054" height="592" viewBox="0 0 1054 592"><rect width="1054" height="592" fill="#000"></rect><polygon points="0.0,503.0 173.0,417.0 508.0,334.0 627.0,335.0 782.0,338.0 1054.0,344.0 1054.0,592.0 0.0,592.0" fill="#1c2023"></polygon><polygon points="82.5,515.6 99.4,513.8 131.0,520.0 168.8,522.0 176.0,527.0 221.0,529.7 223.0,533.4 202.5,535.0 163.0,534.0 155.6,540.0 163.0,545.6 228.8,540.0 230.6,547.5 187.5,552.0 172.5,555.0 172.5,562.5 187.5,566.0 292.5,567.0 272.0,572.0 244.0,574.7 215.6,579.4 178.0,579.4 172.5,592.5 159.0,592.5 147.0,580.0 122.0,578.0 112.5,581.0 75.0,592.5 33.8,592.5 65.6,585.0 97.5,560.6 110.6,555.0 108.8,536.0 97.5,527.0" fill="#303234"></polygon><polygon points="259.0,581.0 281.0,578.0 287.0,592.0 255.0,592.0" fill="#303234"></polygon><ellipse cx="139" cy="542" rx="8" ry="2.5" fill="#1c2023"></ellipse><ellipse cx="145" cy="569" rx="7" ry="2.5" fill="#1c2023"></ellipse><polygon points="338.0,437.0 345.0,420.0 354.0,412.5 427.0,408.0 588.0,403.0 607.0,410.6 594.0,433.0 527.0,436.0 438.0,444.0 407.0,460.0 397.0,472.5 417.0,490.0 438.0,502.5 472.0,517.5 466.0,529.0 378.0,529.0 401.0,519.0 367.0,502.5 341.0,465.0" fill="#303234"></polygon><polygon points="367.0,426.0 417.0,420.0 487.0,423.0 457.0,430.0 397.0,432.0 372.0,438.0" fill="#1c2023" opacity="0.85"></polygon><polygon points="362.0,448.0 407.0,438.0 477.0,434.0 497.0,438.0 427.0,446.0 379.0,456.0" fill="#1c2023" opacity="0.85"></polygon><polygon points="363.0,465.0 392.0,454.0 417.0,452.0 397.0,465.0 372.0,475.0" fill="#1c2023" opacity="0.85"></polygon><rect x="420" y="501" width="1" height="1" fill="#b4b4b4"></rect><rect x="427" y="497" width="1" height="1" fill="#b4b4b4"></rect><rect x="395" y="489" width="2" height="1" fill="#b4b4b4"></rect><rect x="416" y="498" width="1" height="2" fill="#b4b4b4"></rect><rect x="400" y="488" width="3" height="1" fill="#b4b4b4"></rect><rect x="420" y="497" width="2" height="1" fill="#b4b4b4"></rect><rect x="398" y="486" width="2" height="1" fill="#b4b4b4"></rect><rect x="416" y="499" width="2" height="1" fill="#b4b4b4"></rect><rect x="435" y="506" width="3" height="1" fill="#b4b4b4"></rect><rect x="391" y="487" width="2" height="1" fill="#b4b4b4"></rect><rect x="393" y="486" width="1" height="2" fill="#b4b4b4"></rect><rect x="423" y="497" width="2" height="1" fill="#b4b4b4"></rect><rect x="429" y="501" width="2" height="1" fill="#b4b4b4"></rect><rect x="413" y="499" width="1" height="1" fill="#b4b4b4"></rect><rect x="426" y="505" width="1" height="2" fill="#b4b4b4"></rect><rect x="428" y="499" width="1" height="1" fill="#b4b4b4"></rect><rect x="435" y="501" width="2" height="2" fill="#b4b4b4"></rect><rect x="402" y="491" width="2" height="1" fill="#b4b4b4"></rect><rect x="394" y="487" width="2" height="1" fill="#b4b4b4"></rect><rect x="406" y="499" width="1" height="1" fill="#b4b4b4"></rect><rect x="423" y="496" width="1" height="2" fill="#b4b4b4"></rect><rect x="397" y="493" width="3" height="1" fill="#b4b4b4"></rect><rect x="425" y="494" width="3" height="1" fill="#b4b4b4"></rect><rect x="401" y="493" width="2" height="1" fill="#b4b4b4"></rect><rect x="421" y="494" width="1" height="1" fill="#b4b4b4"></rect><rect x="406" y="489" width="2" height="2" fill="#b4b4b4"></rect><rect x="433" y="501" width="2" height="1" fill="#b4b4b4"></rect><rect x="408" y="488" width="3" height="1" fill="#b4b4b4"></rect><rect x="420" y="493" width="3" height="1" fill="#b4b4b4"></rect><rect x="423" y="497" width="2" height="1" fill="#b4b4b4"></rect><rect x="413" y="501" width="1" height="1" fill="#b4b4b4"></rect><rect x="429" y="502" width="2" height="2" fill="#b4b4b4"></rect><rect x="399" y="491" width="2" height="1" fill="#b4b4b4"></rect><rect x="428" y="505" width="1" height="1" fill="#b4b4b4"></rect><rect x="407" y="497" width="2" height="1" fill="#b4b4b4"></rect><rect x="406" y="489" width="1" height="1" fill="#b4b4b4"></rect><rect x="416" y="493" width="2" height="1" fill="#b4b4b4"></rect><rect x="404" y="492" width="2" height="1" fill="#b4b4b4"></rect><rect x="403" y="490" width="3" height="1" fill="#b4b4b4"></rect><rect x="432" y="501" width="2" height="1" fill="#b4b4b4"></rect><rect x="415" y="497" width="2" height="1" fill="#b4b4b4"></rect><rect x="413" y="498" width="3" height="1" fill="#b4b4b4"></rect><rect x="420" y="504" width="3" height="1" fill="#b4b4b4"></rect><rect x="420" y="502" width="2" height="2" fill="#b4b4b4"></rect><rect x="418" y="499" width="2" height="1" fill="#b4b4b4"></rect><rect x="426" y="496" width="1" height="1" fill="#b4b4b4"></rect><rect x="436" y="504" width="1" height="1" fill="#b4b4b4"></rect><rect x="412" y="494" width="1" height="2" fill="#b4b4b4"></rect><rect x="400" y="494" width="2" height="1" fill="#b4b4b4"></rect><rect x="407" y="500" width="3" height="1" fill="#b4b4b4"></rect><rect x="423" y="500" width="1" height="2" fill="#b4b4b4"></rect><rect x="419" y="492" width="2" height="2" fill="#b4b4b4"></rect><rect x="404" y="490" width="2" height="1" fill="#b4b4b4"></rect><rect x="410" y="495" width="2" height="1" fill="#b4b4b4"></rect><rect x="397" y="491" width="3" height="1" fill="#b4b4b4"></rect><rect x="436" y="505" width="2" height="2" fill="#b4b4b4"></rect><rect x="417" y="499" width="2" height="1" fill="#b4b4b4"></rect><rect x="420" y="504" width="3" height="1" fill="#b4b4b4"></rect><rect x="411" y="491" width="2" height="1" fill="#b4b4b4"></rect><rect x="437" y="502" width="2" height="2" fill="#b4b4b4"></rect><rect x="419" y="501" width="2" height="1" fill="#b4b4b4"></rect><rect x="435" y="501" width="2" height="1" fill="#b4b4b4"></rect><rect x="413" y="490" width="3" height="1" fill="#b4b4b4"></rect><rect x="404" y="496" width="3" height="1" fill="#b4b4b4"></rect><rect x="413" y="497" width="2" height="1" fill="#b4b4b4"></rect><rect x="428" y="497" width="2" height="1" fill="#b4b4b4"></rect><rect x="425" y="497" width="3" height="2" fill="#b4b4b4"></rect><rect x="438" y="505" width="1" height="1" fill="#b4b4b4"></rect><rect x="426" y="498" width="2" height="2" fill="#b4b4b4"></rect><rect x="404" y="493" width="3" height="1" fill="#b4b4b4"></rect><rect x="407" y="497" width="2" height="1" fill="#b4b4b4"></rect><rect x="423" y="494" width="2" height="1" fill="#b4b4b4"></rect><rect x="411" y="499" width="3" height="1" fill="#b4b4b4"></rect><rect x="413" y="498" width="2" height="1" fill="#b4b4b4"></rect><rect x="412" y="499" width="2" height="1" fill="#b4b4b4"></rect><rect x="423" y="498" width="2" height="2" fill="#b4b4b4"></rect><rect x="427" y="506" width="2" height="1" fill="#b4b4b4"></rect><rect x="413" y="496" width="3" height="1" fill="#b4b4b4"></rect><rect x="416" y="496" width="1" height="1" fill="#b4b4b4"></rect><rect x="425" y="497" width="1" height="1" fill="#b4b4b4"></rect><rect x="401" y="493" width="1" height="2" fill="#b4b4b4"></rect><rect x="424" y="499" width="2" height="2" fill="#b4b4b4"></rect><rect x="399" y="495" width="1" height="2" fill="#b4b4b4"></rect><rect x="400" y="492" width="3" height="2" fill="#b4b4b4"></rect><rect x="418" y="501" width="2" height="1" fill="#b4b4b4"></rect><rect x="411" y="492" width="3" height="1" fill="#b4b4b4"></rect><rect x="407" y="496" width="1" height="1" fill="#b4b4b4"></rect><rect x="423" y="494" width="2" height="2" fill="#b4b4b4"></rect><rect x="416" y="493" width="1" height="2" fill="#b4b4b4"></rect><rect x="401" y="496" width="2" height="2" fill="#b4b4b4"></rect><rect x="431" y="501" width="3" height="1" fill="#b4b4b4"></rect><rect x="406" y="494" width="1" height="1" fill="#b4b4b4"></rect><rect x="431" y="502" width="3" height="1" fill="#b4b4b4"></rect><rect x="409" y="494" width="2" height="1" fill="#b4b4b4"></rect><rect x="425" y="494" width="2" height="1" fill="#b4b4b4"></rect><rect x="423" y="495" width="1" height="1" fill="#b4b4b4"></rect><rect x="429" y="496" width="3" height="1" fill="#b4b4b4"></rect><rect x="430" y="499" width="2" height="1" fill="#b4b4b4"></rect><rect x="408" y="497" width="2" height="2" fill="#b4b4b4"></rect><rect x="404" y="494" width="2" height="2" fill="#b4b4b4"></rect><rect x="400" y="487" width="1" height="1" fill="#b4b4b4"></rect><rect x="399" y="491" width="3" height="2" fill="#b4b4b4"></rect><rect x="413" y="501" width="3" height="1" fill="#b4b4b4"></rect><rect x="412" y="490" width="2" height="2" fill="#b4b4b4"></rect><rect x="398" y="489" width="3" height="1" fill="#b4b4b4"></rect><rect x="397" y="487" width="2" height="1" fill="#b4b4b4"></rect><rect x="426" y="503" width="1" height="1" fill="#b4b4b4"></rect><rect x="433" y="500" width="2" height="1" fill="#b4b4b4"></rect><rect x="435" y="506" width="3" height="1" fill="#b4b4b4"></rect><rect x="431" y="497" width="2" height="1" fill="#b4b4b4"></rect><rect x="412" y="492" width="2" height="1" fill="#b4b4b4"></rect><rect x="409" y="501" width="2" height="2" fill="#b4b4b4"></rect><rect x="405" y="492" width="2" height="1" fill="#b4b4b4"></rect><rect x="425" y="503" width="2" height="1" fill="#b4b4b4"></rect><rect x="398" y="486" width="1" height="2" fill="#b4b4b4"></rect><rect x="419" y="501" width="2" height="1" fill="#b4b4b4"></rect><rect x="412" y="495" width="3" height="1" fill="#b4b4b4"></rect><rect x="392" y="489" width="2" height="1" fill="#b4b4b4"></rect><rect x="424" y="496" width="3" height="1" fill="#b4b4b4"></rect><rect x="409" y="488" width="2" height="1" fill="#b4b4b4"></rect><rect x="411" y="497" width="1" height="1" fill="#b4b4b4"></rect><rect x="399" y="491" width="3" height="1" fill="#b4b4b4"></rect><rect x="416" y="491" width="2" height="1" fill="#b4b4b4"></rect><rect x="425" y="502" width="3" height="2" fill="#b4b4b4"></rect><rect x="407" y="493" width="3" height="2" fill="#b4b4b4"></rect><rect x="420" y="501" width="2" height="2" fill="#b4b4b4"></rect><rect x="412" y="500" width="2" height="2" fill="#b4b4b4"></rect><rect x="396" y="487" width="1" height="1" fill="#b4b4b4"></rect><rect x="429" y="499" width="2" height="2" fill="#b4b4b4"></rect><rect x="394" y="485" width="1" height="1" fill="#b4b4b4"></rect><rect x="436" y="506" width="2" height="1" fill="#b4b4b4"></rect><rect x="414" y="492" width="2" height="1" fill="#b4b4b4"></rect><rect x="408" y="498" width="1" height="1" fill="#b4b4b4"></rect><rect x="421" y="502" width="1" height="1" fill="#b4b4b4"></rect><rect x="397" y="493" width="1" height="2" fill="#b4b4b4"></rect><rect x="392" y="487" width="1" height="1" fill="#b4b4b4"></rect><rect x="417" y="495" width="2" height="1" fill="#b4b4b4"></rect><rect x="397" y="490" width="2" height="1" fill="#b4b4b4"></rect><rect x="392" y="489" width="1" height="1" fill="#b4b4b4"></rect><rect x="430" y="501" width="2" height="2" fill="#b4b4b4"></rect><rect x="391" y="488" width="2" height="1" fill="#b4b4b4"></rect><rect x="400" y="489" width="2" height="2" fill="#b4b4b4"></rect><rect x="420" y="493" width="1" height="1" fill="#b4b4b4"></rect><rect x="415" y="492" width="2" height="1" fill="#b4b4b4"></rect><rect x="427" y="500" width="3" height="1" fill="#b4b4b4"></rect><rect x="406" y="492" width="2" height="1" fill="#b4b4b4"></rect><rect x="419" y="493" width="1" height="2" fill="#b4b4b4"></rect><rect x="435" y="504" width="3" height="2" fill="#b4b4b4"></rect><rect x="431" y="504" width="2" height="1" fill="#b4b4b4"></rect><rect x="392" y="489" width="3" height="2" fill="#b4b4b4"></rect><rect x="432" y="501" width="2" height="1" fill="#b4b4b4"></rect><rect x="403" y="488" width="2" height="1" fill="#b4b4b4"></rect><rect x="408" y="498" width="1" height="2" fill="#b4b4b4"></rect><rect x="414" y="494" width="2" height="1" fill="#b4b4b4"></rect><rect x="414" y="489" width="2" height="1" fill="#b4b4b4"></rect><rect x="395" y="492" width="2" height="1" fill="#b4b4b4"></rect><rect x="413" y="495" width="1" height="1" fill="#b4b4b4"></rect><rect x="415" y="497" width="2" height="1" fill="#b4b4b4"></rect><rect x="419" y="498" width="3" height="2" fill="#b4b4b4"></rect><rect x="424" y="498" width="1" height="2" fill="#b4b4b4"></rect><rect x="397" y="489" width="1" height="2" fill="#b4b4b4"></rect><rect x="427" y="496" width="2" height="1" fill="#b4b4b4"></rect><rect x="419" y="503" width="3" height="1" fill="#b4b4b4"></rect><rect x="407" y="498" width="2" height="1" fill="#b4b4b4"></rect><rect x="415" y="502" width="2" height="1" fill="#b4b4b4"></rect><rect x="437" y="505" width="3" height="1" fill="#b4b4b4"></rect><rect x="422" y="497" width="2" height="2" fill="#b4b4b4"></rect><rect x="419" y="496" width="1" height="2" fill="#b4b4b4"></rect><rect x="433" y="505" width="2" height="1" fill="#b4b4b4"></rect><rect x="433" y="498" width="2" height="1" fill="#b4b4b4"></rect><rect x="410" y="490" width="1" height="2" fill="#b4b4b4"></rect><rect x="417" y="502" width="3" height="1" fill="#b4b4b4"></rect><rect x="401" y="491" width="2" height="1" fill="#b4b4b4"></rect><rect x="410" y="489" width="2" height="1" fill="#b4b4b4"></rect><rect x="410" y="490" width="2" height="2" fill="#b4b4b4"></rect><rect x="417" y="498" width="3" height="1" fill="#b4b4b4"></rect><rect x="406" y="488" width="2" height="2" fill="#b4b4b4"></rect><rect x="397" y="490" width="1" height="1" fill="#b4b4b4"></rect><rect x="399" y="490" width="3" height="1" fill="#b4b4b4"></rect><rect x="433" y="504" width="3" height="1" fill="#b4b4b4"></rect><rect x="395" y="487" width="2" height="2" fill="#b4b4b4"></rect><rect x="426" y="501" width="3" height="2" fill="#b4b4b4"></rect><rect x="405" y="497" width="2" height="2" fill="#b4b4b4"></rect><rect x="433" y="503" width="1" height="1" fill="#b4b4b4"></rect><rect x="400" y="489" width="3" height="2" fill="#b4b4b4"></rect><rect x="412" y="489" width="2" height="1" fill="#b4b4b4"></rect><rect x="423" y="499" width="2" height="2" fill="#b4b4b4"></rect><rect x="425" y="497" width="1" height="1" fill="#b4b4b4"></rect><rect x="399" y="489" width="2" height="1" fill="#b4b4b4"></rect><rect x="433" y="505" width="1" height="2" fill="#b4b4b4"></rect><rect x="395" y="488" width="1" height="2" fill="#b4b4b4"></rect><rect x="411" y="491" width="2" height="1" fill="#b4b4b4"></rect><rect x="422" y="493" width="2" height="1" fill="#b4b4b4"></rect><rect x="417" y="496" width="2" height="2" fill="#b4b4b4"></rect><rect x="431" y="507" width="2" height="1" fill="#b4b4b4"></rect><rect x="412" y="490" width="1" height="1" fill="#b4b4b4"></rect><rect x="429" y="496" width="1" height="1" fill="#b4b4b4"></rect><rect x="402" y="491" width="3" height="2" fill="#b4b4b4"></rect><rect x="399" y="495" width="1" height="1" fill="#b4b4b4"></rect><rect x="415" y="503" width="3" height="2" fill="#b4b4b4"></rect><rect x="459" y="515" width="1" height="1" fill="#b4b4b4"></rect><rect x="440" y="518" width="3" height="1" fill="#b4b4b4"></rect><rect x="428" y="510" width="2" height="1" fill="#b4b4b4"></rect><rect x="441" y="519" width="2" height="1" fill="#b4b4b4"></rect><rect x="439" y="510" width="2" height="1" fill="#b4b4b4"></rect><rect x="452" y="518" width="3" height="1" fill="#b4b4b4"></rect><rect x="423" y="510" width="3" height="1" fill="#b4b4b4"></rect><rect x="450" y="510" width="2" height="1" fill="#b4b4b4"></rect><rect x="441" y="511" width="2" height="1" fill="#b4b4b4"></rect><rect x="459" y="511" width="1" height="1" fill="#b4b4b4"></rect><rect x="425" y="514" width="2" height="1" fill="#b4b4b4"></rect><rect x="438" y="513" width="3" height="1" fill="#b4b4b4"></rect><rect x="439" y="510" width="1" height="1" fill="#b4b4b4"></rect><rect x="431" y="515" width="2" height="1" fill="#b4b4b4"></rect><rect x="422" y="512" width="1" height="2" fill="#b4b4b4"></rect><rect x="439" y="512" width="1" height="2" fill="#b4b4b4"></rect><rect x="434" y="512" width="1" height="1" fill="#b4b4b4"></rect><rect x="449" y="512" width="3" height="1" fill="#b4b4b4"></rect><rect x="435" y="509" width="1" height="2" fill="#b4b4b4"></rect><rect x="442" y="517" width="3" height="1" fill="#b4b4b4"></rect><rect x="467" y="514" width="2" height="1" fill="#b4b4b4"></rect><rect x="426" y="510" width="3" height="1" fill="#b4b4b4"></rect><rect x="448" y="511" width="3" height="1" fill="#b4b4b4"></rect><rect x="437" y="509" width="2" height="1" fill="#b4b4b4"></rect><rect x="461" y="515" width="2" height="2" fill="#b4b4b4"></rect><rect x="425" y="509" width="1" height="2" fill="#b4b4b4"></rect><rect x="432" y="509" width="2" height="2" fill="#b4b4b4"></rect><rect x="433" y="517" width="3" height="1" fill="#b4b4b4"></rect><rect x="450" y="515" width="2" height="2" fill="#b4b4b4"></rect><rect x="425" y="512" width="3" height="2" fill="#b4b4b4"></rect><rect x="450" y="510" width="3" height="2" fill="#b4b4b4"></rect><rect x="449" y="515" width="1" height="2" fill="#b4b4b4"></rect><rect x="422" y="514" width="1" height="1" fill="#b4b4b4"></rect><rect x="422" y="511" width="1" height="2" fill="#b4b4b4"></rect><rect x="454" y="512" width="3" height="1" fill="#b4b4b4"></rect><rect x="432" y="510" width="1" height="1" fill="#b4b4b4"></rect><rect x="446" y="519" width="3" height="1" fill="#b4b4b4"></rect><rect x="427" y="509" width="2" height="1" fill="#b4b4b4"></rect><rect x="424" y="510" width="1" height="2" fill="#b4b4b4"></rect><rect x="441" y="515" width="3" height="1" fill="#b4b4b4"></rect><rect x="428" y="512" width="2" height="1" fill="#b4b4b4"></rect><rect x="427" y="509" width="3" height="2" fill="#b4b4b4"></rect><rect x="447" y="519" width="2" height="2" fill="#b4b4b4"></rect><rect x="428" y="513" width="2" height="1" fill="#b4b4b4"></rect><rect x="434" y="508" width="2" height="1" fill="#b4b4b4"></rect><rect x="438" y="518" width="2" height="1" fill="#b4b4b4"></rect><rect x="452" y="516" width="1" height="2" fill="#b4b4b4"></rect><rect x="459" y="513" width="1" height="2" fill="#b4b4b4"></rect><rect x="434" y="516" width="2" height="1" fill="#b4b4b4"></rect><rect x="459" y="516" width="2" height="2" fill="#b4b4b4"></rect><rect x="436" y="516" width="1" height="1" fill="#b4b4b4"></rect><rect x="435" y="511" width="2" height="1" fill="#b4b4b4"></rect><rect x="440" y="513" width="1" height="1" fill="#b4b4b4"></rect><rect x="441" y="519" width="2" height="2" fill="#b4b4b4"></rect><rect x="425" y="512" width="2" height="1" fill="#b4b4b4"></rect><rect x="443" y="509" width="2" height="1" fill="#b4b4b4"></rect><rect x="451" y="510" width="3" height="1" fill="#b4b4b4"></rect><rect x="425" y="510" width="3" height="1" fill="#b4b4b4"></rect><rect x="453" y="511" width="2" height="1" fill="#b4b4b4"></rect><rect x="465" y="519" width="1" height="1" fill="#b4b4b4"></rect><rect x="435" y="517" width="3" height="1" fill="#b4b4b4"></rect><rect x="442" y="519" width="2" height="1" fill="#b4b4b4"></rect><rect x="428" y="514" width="3" height="1" fill="#b4b4b4"></rect><rect x="440" y="516" width="1" height="1" fill="#b4b4b4"></rect><rect x="450" y="514" width="1" height="1" fill="#b4b4b4"></rect><rect x="442" y="515" width="2" height="2" fill="#b4b4b4"></rect><rect x="444" y="511" width="2" height="2" fill="#b4b4b4"></rect><rect x="438" y="508" width="1" height="1" fill="#b4b4b4"></rect><rect x="459" y="513" width="3" height="2" fill="#b4b4b4"></rect><rect x="446" y="515" width="2" height="1" fill="#b4b4b4"></rect><rect x="441" y="513" width="2" height="1" fill="#b4b4b4"></rect><rect x="453" y="518" width="1" height="1" fill="#b4b4b4"></rect><rect x="444" y="510" width="3" height="2" fill="#b4b4b4"></rect><rect x="434" y="517" width="3" height="1" fill="#b4b4b4"></rect><rect x="467" y="516" width="2" height="2" fill="#b4b4b4"></rect><rect x="455" y="518" width="1" height="1" fill="#b4b4b4"></rect><rect x="449" y="516" width="3" height="1" fill="#b4b4b4"></rect><rect x="447" y="514" width="1" height="2" fill="#b4b4b4"></rect><rect x="463" y="513" width="3" height="2" fill="#b4b4b4"></rect><rect x="424" y="511" width="2" height="2" fill="#b4b4b4"></rect><rect x="453" y="516" width="2" height="1" fill="#b4b4b4"></rect><rect x="449" y="511" width="1" height="1" fill="#b4b4b4"></rect><rect x="448" y="515" width="3" height="2" fill="#b4b4b4"></rect><rect x="457" y="520" width="1" height="1" fill="#b4b4b4"></rect><rect x="441" y="513" width="2" height="1" fill="#b4b4b4"></rect><rect x="425" y="511" width="3" height="1" fill="#b4b4b4"></rect><rect x="444" y="514" width="1" height="2" fill="#b4b4b4"></rect><rect x="459" y="517" width="2" height="1" fill="#b4b4b4"></rect><rect x="453" y="514" width="2" height="1" fill="#b4b4b4"></rect><rect x="455" y="511" width="2" height="1" fill="#b4b4b4"></rect><rect x="428" y="511" width="1" height="1" fill="#b4b4b4"></rect><rect x="464" y="515" width="1" height="1" fill="#b4b4b4"></rect><rect x="455" y="512" width="3" height="1" fill="#b4b4b4"></rect><rect x="433" y="513" width="2" height="2" fill="#b4b4b4"></rect><rect x="455" y="519" width="2" height="1" fill="#b4b4b4"></rect><rect x="460" y="515" width="3" height="2" fill="#b4b4b4"></rect><rect x="429" y="510" width="2" height="2" fill="#b4b4b4"></rect><rect x="454" y="518" width="2" height="2" fill="#b4b4b4"></rect><rect x="452" y="517" width="3" height="1" fill="#b4b4b4"></rect><rect x="461" y="517" width="2" height="1" fill="#b4b4b4"></rect><rect x="447" y="517" width="1" height="2" fill="#b4b4b4"></rect><rect x="419" y="512" width="2" height="2" fill="#b4b4b4"></rect><rect x="422" y="513" width="3" height="1" fill="#b4b4b4"></rect><rect x="461" y="515" width="2" height="2" fill="#b4b4b4"></rect><rect x="469" y="515" width="3" height="1" fill="#b4b4b4"></rect><rect x="448" y="520" width="1" height="1" fill="#b4b4b4"></rect><rect x="444" y="509" width="1" height="2" fill="#b4b4b4"></rect><rect x="444" y="509" width="2" height="1" fill="#b4b4b4"></rect><rect x="423" y="510" width="2" height="1" fill="#b4b4b4"></rect><rect x="437" y="516" width="1" height="1" fill="#b4b4b4"></rect><rect x="452" y="518" width="1" height="2" fill="#b4b4b4"></rect><rect x="464" y="518" width="1" height="1" fill="#b4b4b4"></rect><rect x="444" y="518" width="2" height="1" fill="#b4b4b4"></rect><rect x="435" y="512" width="3" height="2" fill="#b4b4b4"></rect><rect x="423" y="514" width="2" height="1" fill="#b4b4b4"></rect><rect x="462" y="517" width="1" height="1" fill="#b4b4b4"></rect><rect x="434" y="508" width="2" height="2" fill="#b4b4b4"></rect><rect x="437" y="510" width="1" height="1" fill="#b4b4b4"></rect><rect x="436" y="517" width="3" height="1" fill="#b4b4b4"></rect><rect x="455" y="520" width="2" height="1" fill="#b4b4b4"></rect><rect x="435" y="513" width="2" height="2" fill="#b4b4b4"></rect><rect x="445" y="518" width="3" height="1" fill="#b4b4b4"></rect><rect x="453" y="516" width="3" height="1" fill="#b4b4b4"></rect><rect x="436" y="508" width="2" height="1" fill="#b4b4b4"></rect><rect x="450" y="516" width="2" height="1" fill="#b4b4b4"></rect><rect x="442" y="517" width="1" height="2" fill="#b4b4b4"></rect><rect x="425" y="515" width="1" height="1" fill="#b4b4b4"></rect><rect x="467" y="514" width="2" height="1" fill="#b4b4b4"></rect><rect x="441" y="510" width="3" height="1" fill="#b4b4b4"></rect><rect x="434" y="515" width="3" height="1" fill="#b4b4b4"></rect><rect x="451" y="519" width="2" height="1" fill="#b4b4b4"></rect><rect x="444" y="512" width="1" height="1" fill="#b4b4b4"></rect><rect x="442" y="511" width="2" height="2" fill="#b4b4b4"></rect><rect x="468" y="515" width="3" height="1" fill="#b4b4b4"></rect><rect x="426" y="515" width="3" height="1" fill="#b4b4b4"></rect><rect x="433" y="509" width="3" height="1" fill="#b4b4b4"></rect><rect x="467" y="515" width="2" height="1" fill="#b4b4b4"></rect><rect x="451" y="514" width="3" height="1" fill="#b4b4b4"></rect><rect x="462" y="518" width="2" height="2" fill="#b4b4b4"></rect><rect x="445" y="515" width="1" height="1" fill="#b4b4b4"></rect><rect x="459" y="513" width="2" height="1" fill="#b4b4b4"></rect><rect x="451" y="511" width="1" height="1" fill="#b4b4b4"></rect><rect x="444" y="510" width="2" height="1" fill="#b4b4b4"></rect><rect x="460" y="512" width="3" height="1" fill="#b4b4b4"></rect><rect x="435" y="510" width="1" height="2" fill="#b4b4b4"></rect><rect x="457" y="520" width="2" height="1" fill="#b4b4b4"></rect><rect x="432" y="509" width="2" height="1" fill="#b4b4b4"></rect><rect x="456" y="515" width="1" height="1" fill="#b4b4b4"></rect><rect x="443" y="511" width="1" height="2" fill="#b4b4b4"></rect><rect x="458" y="518" width="2" height="1" fill="#b4b4b4"></rect><rect x="454" y="510" width="3" height="1" fill="#b4b4b4"></rect><rect x="427" y="515" width="2" height="1" fill="#b4b4b4"></rect><rect x="438" y="519" width="3" height="1" fill="#b4b4b4"></rect><rect x="463" y="519" width="2" height="2" fill="#b4b4b4"></rect><rect x="439" y="511" width="2" height="2" fill="#b4b4b4"></rect><rect x="434" y="509" width="1" height="2" fill="#b4b4b4"></rect><rect x="449" y="511" width="1" height="2" fill="#b4b4b4"></rect><rect x="435" y="510" width="2" height="1" fill="#b4b4b4"></rect><rect x="454" y="516" width="2" height="2" fill="#b4b4b4"></rect><rect x="426" y="515" width="2" height="1" fill="#b4b4b4"></rect><rect x="451" y="516" width="3" height="1" fill="#b4b4b4"></rect><rect x="464" y="517" width="2" height="1" fill="#b4b4b4"></rect><rect x="450" y="516" width="1" height="2" fill="#b4b4b4"></rect><rect x="458" y="513" width="3" height="2" fill="#b4b4b4"></rect><rect x="427" y="516" width="3" height="1" fill="#b4b4b4"></rect><rect x="463" y="520" width="2" height="1" fill="#b4b4b4"></rect><rect x="429" y="513" width="2" height="2" fill="#b4b4b4"></rect><rect x="420" y="511" width="2" height="2" fill="#b4b4b4"></rect><rect x="427" y="511" width="2" height="1" fill="#b4b4b4"></rect><rect x="452" y="512" width="1" height="2" fill="#b4b4b4"></rect><rect x="432" y="514" width="2" height="1" fill="#b4b4b4"></rect><rect x="442" y="511" width="3" height="1" fill="#b4b4b4"></rect><rect x="444" y="510" width="3" height="2" fill="#b4b4b4"></rect><rect x="440" y="515" width="2" height="2" fill="#b4b4b4"></rect><rect x="459" y="513" width="2" height="1" fill="#b4b4b4"></rect><rect x="441" y="517" width="2" height="1" fill="#b4b4b4"></rect><rect x="456" y="518" width="2" height="2" fill="#b4b4b4"></rect><rect x="451" y="516" width="1" height="1" fill="#b4b4b4"></rect><rect x="458" y="512" width="3" height="1" fill="#b4b4b4"></rect><rect x="446" y="517" width="3" height="1" fill="#b4b4b4"></rect><rect x="468" y="516" width="2" height="1" fill="#b4b4b4"></rect><rect x="436" y="516" width="2" height="1" fill="#b4b4b4"></rect><rect x="425" y="511" width="3" height="2" fill="#b4b4b4"></rect><rect x="455" y="517" width="2" height="1" fill="#b4b4b4"></rect><rect x="461" y="520" width="1" height="1" fill="#b4b4b4"></rect><rect x="442" y="510" width="1" height="1" fill="#b4b4b4"></rect><rect x="436" y="516" width="2" height="2" fill="#b4b4b4"></rect><rect x="431" y="509" width="3" height="2" fill="#b4b4b4"></rect><rect x="465" y="514" width="2" height="1" fill="#b4b4b4"></rect><rect x="445" y="509" width="2" height="2" fill="#b4b4b4"></rect><rect x="467" y="514" width="2" height="1" fill="#b4b4b4"></rect><rect x="461" y="513" width="1" height="2" fill="#b4b4b4"></rect><rect x="445" y="519" width="2" height="1" fill="#b4b4b4"></rect><rect x="441" y="510" width="3" height="1" fill="#b4b4b4"></rect><rect x="435" y="517" width="2" height="1" fill="#b4b4b4"></rect><rect x="434" y="510" width="2" height="1" fill="#b4b4b4"></rect><rect x="448" y="511" width="2" height="1" fill="#b4b4b4"></rect><rect x="426" y="516" width="1" height="1" fill="#b4b4b4"></rect><rect x="442" y="517" width="2" height="1" fill="#b4b4b4"></rect><rect x="436" y="509" width="3" height="2" fill="#b4b4b4"></rect><rect x="456" y="518" width="1" height="1" fill="#b4b4b4"></rect><rect x="435" y="514" width="2" height="2" fill="#b4b4b4"></rect><rect x="470" y="517" width="2" height="1" fill="#b4b4b4"></rect><rect x="423" y="511" width="1" height="1" fill="#b4b4b4"></rect><rect x="378" y="425" width="3" height="1" fill="#b4b4b4"></rect><rect x="374" y="426" width="2" height="1" fill="#b4b4b4"></rect><rect x="368" y="424" width="3" height="2" fill="#b4b4b4"></rect><rect x="370" y="425" width="3" height="2" fill="#b4b4b4"></rect><rect x="380" y="422" width="1" height="1" fill="#b4b4b4"></rect><rect x="368" y="423" width="1" height="2" fill="#b4b4b4"></rect><rect x="378" y="424" width="2" height="1" fill="#b4b4b4"></rect><rect x="372" y="422" width="3" height="1" fill="#b4b4b4"></rect><rect x="372" y="423" width="2" height="2" fill="#b4b4b4"></rect><rect x="377" y="425" width="3" height="1" fill="#b4b4b4"></rect><rect x="384" y="421" width="3" height="2" fill="#b4b4b4"></rect><rect x="388" y="425" width="2" height="1" fill="#b4b4b4"></rect><rect x="380" y="422" width="3" height="2" fill="#b4b4b4"></rect><rect x="379" y="426" width="2" height="1" fill="#b4b4b4"></rect><rect x="379" y="426" width="2" height="1" fill="#b4b4b4"></rect><rect x="391" y="425" width="1" height="2" fill="#b4b4b4"></rect><rect x="373" y="425" width="2" height="2" fill="#b4b4b4"></rect><rect x="380" y="425" width="2" height="1" fill="#b4b4b4"></rect><rect x="387" y="426" width="3" height="2" fill="#b4b4b4"></rect><rect x="377" y="425" width="3" height="1" fill="#b4b4b4"></rect><rect x="388" y="422" width="2" height="2" fill="#b4b4b4"></rect><rect x="370" y="425" width="3" height="2" fill="#b4b4b4"></rect><rect x="385" y="424" width="2" height="1" fill="#b4b4b4"></rect><rect x="371" y="422" width="1" height="1" fill="#b4b4b4"></rect><rect x="375" y="423" width="2" height="1" fill="#b4b4b4"></rect><rect x="379" y="422" width="1" height="1" fill="#b4b4b4"></rect><rect x="374" y="422" width="3" height="1" fill="#b4b4b4"></rect><rect x="369" y="423" width="3" height="2" fill="#b4b4b4"></rect><rect x="370" y="422" width="3" height="1" fill="#b4b4b4"></rect><rect x="383" y="426" width="1" height="2" fill="#b4b4b4"></rect><rect x="382" y="422" width="2" height="2" fill="#b4b4b4"></rect><rect x="403" y="438" width="1" height="1" fill="#b4b4b4"></rect><rect x="422" y="440" width="3" height="2" fill="#b4b4b4"></rect><rect x="415" y="443" width="2" height="2" fill="#b4b4b4"></rect><rect x="412" y="441" width="2" height="2" fill="#b4b4b4"></rect><rect x="423" y="441" width="2" height="1" fill="#b4b4b4"></rect><rect x="413" y="440" width="3" height="2" fill="#b4b4b4"></rect><rect x="407" y="442" width="2" height="1" fill="#b4b4b4"></rect><rect x="405" y="441" width="2" height="1" fill="#b4b4b4"></rect><rect x="419" y="442" width="1" height="2" fill="#b4b4b4"></rect><rect x="395" y="439" width="1" height="1" fill="#b4b4b4"></rect><rect x="427" y="440" width="3" height="1" fill="#b4b4b4"></rect><rect x="408" y="439" width="2" height="1" fill="#b4b4b4"></rect><rect x="419" y="441" width="2" height="2" fill="#b4b4b4"></rect><rect x="425" y="442" width="3" height="1" fill="#b4b4b4"></rect><rect x="401" y="441" width="2" height="1" fill="#b4b4b4"></rect><rect x="405" y="437" width="1" height="1" fill="#b4b4b4"></rect><rect x="424" y="440" width="1" height="1" fill="#b4b4b4"></rect><rect x="418" y="437" width="2" height="2" fill="#b4b4b4"></rect><rect x="413" y="441" width="3" height="2" fill="#b4b4b4"></rect><rect x="412" y="438" width="2" height="1" fill="#b4b4b4"></rect><rect x="411" y="441" width="3" height="1" fill="#b4b4b4"></rect><rect x="414" y="441" width="3" height="2" fill="#b4b4b4"></rect><rect x="401" y="441" width="3" height="1" fill="#b4b4b4"></rect><rect x="406" y="444" width="3" height="2" fill="#b4b4b4"></rect><rect x="408" y="439" width="2" height="1" fill="#b4b4b4"></rect><rect x="420" y="440" width="3" height="1" fill="#b4b4b4"></rect><rect x="410" y="443" width="1" height="1" fill="#b4b4b4"></rect><rect x="415" y="442" width="3" height="1" fill="#b4b4b4"></rect><rect x="403" y="441" width="3" height="1" fill="#b4b4b4"></rect><rect x="403" y="439" width="1" height="1" fill="#b4b4b4"></rect><rect x="416" y="437" width="2" height="1" fill="#b4b4b4"></rect><rect x="409" y="442" width="2" height="1" fill="#b4b4b4"></rect><rect x="400" y="439" width="2" height="1" fill="#b4b4b4"></rect><rect x="415" y="438" width="3" height="2" fill="#b4b4b4"></rect><rect x="405" y="443" width="2" height="1" fill="#b4b4b4"></rect><rect x="412" y="437" width="2" height="1" fill="#b4b4b4"></rect><rect x="414" y="436" width="1" height="2" fill="#b4b4b4"></rect><rect x="404" y="438" width="3" height="1" fill="#b4b4b4"></rect><rect x="394" y="440" width="2" height="1" fill="#b4b4b4"></rect><rect x="412" y="440" width="1" height="2" fill="#b4b4b4"></rect><rect x="476" y="420" width="1" height="2" fill="#b4b4b4"></rect><rect x="488" y="418" width="1" height="2" fill="#b4b4b4"></rect><rect x="470" y="417" width="1" height="1" fill="#b4b4b4"></rect><rect x="483" y="418" width="2" height="1" fill="#b4b4b4"></rect><rect x="473" y="420" width="3" height="2" fill="#b4b4b4"></rect><rect x="469" y="419" width="3" height="2" fill="#b4b4b4"></rect><rect x="476" y="419" width="2" height="2" fill="#b4b4b4"></rect><rect x="476" y="416" width="1" height="2" fill="#b4b4b4"></rect><rect x="484" y="420" width="2" height="1" fill="#b4b4b4"></rect><rect x="474" y="419" width="2" height="1" fill="#b4b4b4"></rect><rect x="478" y="419" width="2" height="1" fill="#b4b4b4"></rect><rect x="473" y="419" width="2" height="1" fill="#b4b4b4"></rect><rect x="484" y="419" width="3" height="1" fill="#b4b4b4"></rect><rect x="478" y="420" width="2" height="1" fill="#b4b4b4"></rect><rect x="424" y="420" width="1" height="1" fill="#b4b4b4"></rect><rect x="418" y="423" width="3" height="1" fill="#b4b4b4"></rect><rect x="420" y="420" width="2" height="2" fill="#b4b4b4"></rect><rect x="427" y="422" width="3" height="1" fill="#b4b4b4"></rect><rect x="410" y="420" width="2" height="1" fill="#b4b4b4"></rect><rect x="423" y="422" width="2" height="2" fill="#b4b4b4"></rect><rect x="419" y="422" width="1" height="1" fill="#b4b4b4"></rect><rect x="425" y="421" width="3" height="1" fill="#b4b4b4"></rect><rect x="428" y="421" width="2" height="2" fill="#b4b4b4"></rect><rect x="421" y="422" width="2" height="1" fill="#b4b4b4"></rect><rect x="416" y="422" width="2" height="1" fill="#b4b4b4"></rect><rect x="411" y="420" width="2" height="1" fill="#b4b4b4"></rect><rect x="412" y="422" width="2" height="1" fill="#b4b4b4"></rect><rect x="412" y="421" width="2" height="2" fill="#b4b4b4"></rect><rect x="422" y="423" width="2" height="2" fill="#b4b4b4"></rect><polygon points="416.0,547.0 471.0,536.0 556.0,532.5 619.5,529.7 657.0,527.8 674.0,510.0 717.0,523.0 763.0,543.0 814.0,564.0 867.0,580.0 927.0,585.0 1054.0,578.0 1054.0,592.0 471.0,592.5 462.0,588.8 449.0,566.0" fill="#353637"></polygon><polygon points="546.0,542.0 574.0,536.0 602.0,592.0 575.0,592.0" fill="#1c2023"></polygon><polygon points="612.0,529.0 629.0,529.0 639.0,551.0 622.0,551.0" fill="#1c2023"></polygon><polygon points="416.0,547.0 449.0,566.0 462.0,588.8 427.0,592.0 416.0,580.0" fill="#1c2023"></polygon><polygon points="507.0,412.0 587.0,406.0 607.0,411.0 594.0,426.0 517.0,428.0" fill="#35373a"></polygon><g clip-path="url(#cc)"><rect x="647" y="335" width="410" height="260" fill="#a2a2a2"></rect><path d="M680.7 339 L779.0 595" stroke="#3a3a3a" stroke-width="1.8" opacity="0.4"></path><path d="M686.3 339 L792.6 595" stroke="#3a3a3a" stroke-width="0.8" opacity="0.4"></path><path d="M692.1 339 L806.6 595" stroke="#3a3a3a" stroke-width="1.8" opacity="0.4"></path><path d="M698.0 339 L820.9 595" stroke="#3a3a3a" stroke-width="1.2" opacity="0.4"></path><path d="M704.0 339 L835.6 595" stroke="#3a3a3a" stroke-width="1.8" opacity="0.4"></path><path d="M710.2 339 L850.6 595" stroke="#3a3a3a" stroke-width="1.8" opacity="0.4"></path><path d="M716.6 339 L866.2 595" stroke="#3a3a3a" stroke-width="1.8" opacity="0.4"></path><path d="M723.2 339 L882.2 595" stroke="#3a3a3a" stroke-width="1" opacity="0.4"></path><path d="M730.0 339 L898.8 595" stroke="#3a3a3a" stroke-width="0.8" opacity="0.4"></path><path d="M737.1 339 L916.0 595" stroke="#3a3a3a" stroke-width="1" opacity="0.4"></path><path d="M744.5 339 L933.9 595" stroke="#3a3a3a" stroke-width="1" opacity="0.4"></path><path d="M752.1 339 L952.5 595" stroke="#3a3a3a" stroke-width="1.2" opacity="0.4"></path><path d="M760.1 339 L971.9 595" stroke="#3a3a3a" stroke-width="1" opacity="0.4"></path><path d="M768.4 339 L992.1 595" stroke="#3a3a3a" stroke-width="1" opacity="0.4"></path><path d="M777.2 339 L1013.4 595" stroke="#3a3a3a" stroke-width="1.2" opacity="0.4"></path><path d="M786.4 339 L1035.8 595" stroke="#3a3a3a" stroke-width="1.8" opacity="0.4"></path><path d="M796.1 339 L1059.3 595" stroke="#3a3a3a" stroke-width="1" opacity="0.4"></path><path d="M806.3 339 L1084.2 595" stroke="#3a3a3a" stroke-width="1.8" opacity="0.4"></path><path d="M817.2 339 L1110.6 595" stroke="#3a3a3a" stroke-width="1.2" opacity="0.4"></path><path d="M828.8 339 L1138.8 595" stroke="#3a3a3a" stroke-width="1.8" opacity="0.4"></path><path d="M841.1 339 L1168.8 595" stroke="#3a3a3a" stroke-width="1.8" opacity="0.4"></path><path d="M854.3 339 L1200.9 595" stroke="#3a3a3a" stroke-width="1" opacity="0.4"></path><path d="M868.6 339 L1235.6 595" stroke="#3a3a3a" stroke-width="1.2" opacity="0.4"></path><path d="M884.0 339 L1273.0 595" stroke="#3a3a3a" stroke-width="1.2" opacity="0.4"></path><path d="M900.7 339 L1313.6 595" stroke="#3a3a3a" stroke-width="0.8" opacity="0.4"></path><path d="M918.9 339 L1357.9 595" stroke="#3a3a3a" stroke-width="1.2" opacity="0.4"></path><path d="M939.0 339 L1406.5 595" stroke="#3a3a3a" stroke-width="1" opacity="0.4"></path><path d="M961.0 339 L1460.2 595" stroke="#3a3a3a" stroke-width="1.8" opacity="0.4"></path><path d="M985.6 339 L1519.9 595" stroke="#3a3a3a" stroke-width="0.8" opacity="0.4"></path><path d="M1013.1 339 L1586.7 595" stroke="#3a3a3a" stroke-width="1.8" opacity="0.4"></path><path d="M1044.1 339 L1662.2 595" stroke="#3a3a3a" stroke-width="0.8" opacity="0.4"></path><path d="M1079.5 339 L1748.2 595" stroke="#3a3a3a" stroke-width="1.2" opacity="0.4"></path><path d="M1120.3 339 L1847.2 595" stroke="#3a3a3a" stroke-width="1" opacity="0.4"></path><path d="M1167.9 339 L1962.8 595" stroke="#3a3a3a" stroke-width="0.8" opacity="0.4"></path><path d="M1224.1 339 L2099.6 595" stroke="#3a3a3a" stroke-width="1.8" opacity="0.4"></path><path d="M1291.9 339 L2264.2 595" stroke="#3a3a3a" stroke-width="1" opacity="0.4"></path><path d="M1375.2 339 L2466.6 595" stroke="#3a3a3a" stroke-width="0.8" opacity="0.4"></path><path d="M1480.2 339 L2721.8 595" stroke="#3a3a3a" stroke-width="1.8" opacity="0.4"></path><path d="M1616.9 339 L3054.1 595" stroke="#3a3a3a" stroke-width="1.8" opacity="0.4"></path><path d="M1802.6 339 L3505.4 595" stroke="#3a3a3a" stroke-width="0.8" opacity="0.4"></path><path d="M642 359.2 L1054 358.0" stroke="#3a3a3a" stroke-width="0.8" opacity="0.35"></path><path d="M642 362.9 L1054 363.3" stroke="#3a3a3a" stroke-width="0.9" opacity="0.35"></path><path d="M642 368.1 L1054 368.9" stroke="#3a3a3a" stroke-width="0.9" opacity="0.35"></path><path d="M642 376.0 L1054 374.9" stroke="#3a3a3a" stroke-width="0.9" opacity="0.35"></path><path d="M642 382.0 L1054 381.3" stroke="#3a3a3a" stroke-width="1.0" opacity="0.35"></path><path d="M642 387.6 L1054 388.1" stroke="#3a3a3a" stroke-width="1.0" opacity="0.35"></path><path d="M642 395.7 L1054 395.4" stroke="#3a3a3a" stroke-width="1.1" opacity="0.35"></path><path d="M642 403.1 L1054 403.1" stroke="#3a3a3a" stroke-width="1.1" opacity="0.35"></path><path d="M642 412.5 L1054 411.4" stroke="#3a3a3a" stroke-width="1.2" opacity="0.35"></path><path d="M642 422.6 L1054 420.2" stroke="#3a3a3a" stroke-width="1.2" opacity="0.35"></path><path d="M642 429.5 L1054 429.6" stroke="#3a3a3a" stroke-width="1.3" opacity="0.35"></path><path d="M642 440.4 L1054 439.7" stroke="#3a3a3a" stroke-width="1.4" opacity="0.35"></path><path d="M642 451.2 L1054 450.4" stroke="#3a3a3a" stroke-width="1.4" opacity="0.35"></path><defs><clipPath id="cc"><polygon points="794.0,340.0 927.0,342.0 1054.0,344.0 1054.0,579.0 964.0,579.0 860.0,574.0 795.0,561.0 743.0,545.0 713.0,527.0 692.0,514.0 666.0,488.0 653.0,465.0 646.0,450.0 645.0,432.0 651.0,415.0 659.0,400.0 666.0,382.0 687.0,375.0 713.0,367.0 747.0,361.0 773.0,358.0 787.0,356.0"></polygon></clipPath><linearGradient id="mlog" gradientUnits="userSpaceOnUse" x1="0" y1="390" x2="0" y2="460"><stop offset="0" stop-color="#fff" stop-opacity="0"></stop><stop offset="1" stop-color="#fff" stop-opacity="1"></stop></linearGradient><mask id="mlo" maskUnits="userSpaceOnUse" x="627" y="320" width="440" height="280"><rect x="627" y="320" width="440" height="280" fill="url(#mlog)"></rect></mask><linearGradient id="mhig" gradientUnits="userSpaceOnUse" x1="0" y1="380" x2="0" y2="480"><stop offset="0" stop-color="#fff" stop-opacity="1"></stop><stop offset="1" stop-color="#fff" stop-opacity="0"></stop></linearGradient><mask id="mhi" maskUnits="userSpaceOnUse" x="627" y="320" width="440" height="280"><rect x="627" y="320" width="440" height="280" fill="url(#mhig)"></rect></mask><linearGradient id="mdtg" gradientUnits="userSpaceOnUse" x1="0" y1="405" x2="0" y2="445"><stop offset="0" stop-color="#fff" stop-opacity="0"></stop><stop offset="1" stop-color="#fff" stop-opacity="1"></stop></linearGradient><mask id="mdt" maskUnits="userSpaceOnUse" x="627" y="320" width="440" height="280"><rect x="627" y="320" width="440" height="280" fill="url(#mdtg)"></rect></mask><filter id="fd1" x="642" y="335" width="415" height="150" filterUnits="userSpaceOnUse" color-interpolation-filters="sRGB"><feTurbulence type="fractalNoise" baseFrequency="0.15 1.0" numOctaves="2" seed="3"></feTurbulence><feColorMatrix type="matrix" values="0 0 0 0 0.204  0 0 0 0 0.204  0 0 0 0 0.204  1 0 0 0 0"></feColorMatrix><feComponentTransfer><feFuncA type="discrete" tableValues="0 0 0 0 0 0 0 0 0 0 0 0 0 0 0 0 0 0 0 0 0 0 0 0 0 0 0 1 1 1 1 1 1 1 1 1 1 1 1 1"></feFuncA></feComponentTransfer></filter><filter id="fd3" x="642" y="335" width="415" height="150" filterUnits="userSpaceOnUse" color-interpolation-filters="sRGB"><feTurbulence type="fractalNoise" baseFrequency="0.7 0.9" numOctaves="2" seed="23"></feTurbulence><feColorMatrix type="matrix" values="0 0 0 0 0.227  0 0 0 0 0.227  0 0 0 0 0.227  1 0 0 0 0"></feColorMatrix><feComponentTransfer><feFuncA type="discrete" tableValues="0 0 0 0 0 0 0 0 0 0 0 0 0 0 0 0 0 0 0 0 0 0 0 0 0 0 0 1 1 1 1 1 1 1 1 1 1 1 1 1"></feFuncA></feComponentTransfer></filter><filter id="fd2" x="642" y="380" width="415" height="215" filterUnits="userSpaceOnUse" color-interpolation-filters="sRGB"><feTurbulence type="fractalNoise" baseFrequency="0.05 0.14" numOctaves="2" seed="5"></feTurbulence><feColorMatrix type="matrix" values="0 0 0 0 0.180  0 0 0 0 0.180  0 0 0 0 0.180  1 0 0 0 0"></feColorMatrix><feComponentTransfer><feFuncA type="discrete" tableValues="0 0 0 0 0 0 0 0 0 0 0 0 0 0 0 0 0 0 0 0 0 0 0 0 1 1 1 1 1 1 1 1 1 1 1 1 1 1 1 1"></feFuncA></feComponentTransfer></filter><filter id="fg" x="642" y="380" width="415" height="205" filterUnits="userSpaceOnUse" color-interpolation-filters="sRGB"><feTurbulence type="fractalNoise" baseFrequency="0.3 0.05" numOctaves="2" seed="21"></feTurbulence><feColorMatrix type="matrix" values="0 0 0 0 0.525  0 0 0 0 0.525  0 0 0 0 0.525  1 0 0 0 0"></feColorMatrix><feComponentTransfer><feFuncA type="discrete" tableValues="0 0 0 0 0 0 0 0 0 0 0 0 0 0 0 0 0 0 0 0 0 0 1 1 1 1 1 1 1 1 1 1 1 1 1 1 1 1 1 1"></feFuncA></feComponentTransfer></filter><filter id="fc4" x="647" y="360" width="410" height="60" filterUnits="userSpaceOnUse" color-interpolation-filters="sRGB"><feTurbulence type="fractalNoise" baseFrequency="0.4 0.25" numOctaves="2" seed="17"></feTurbulence><feColorMatrix type="matrix" values="0 0 0 0 0.180  0 0 0 0 0.878  0 0 0 0 0.753  1 0 0 0 0"></feColorMatrix><feComponentTransfer><feFuncA type="discrete" tableValues="0 0 0 0 0 0 0 0 0 0 0 0 0 0 0 0 0 0 0 0 0 0 0 0 0 0 0 0 1 1 1 1 1 1 1 1 1 1 1 1"></feFuncA></feComponentTransfer></filter><filter id="fc2" x="642" y="380" width="415" height="215" filterUnits="userSpaceOnUse" color-interpolation-filters="sRGB"><feTurbulence type="fractalNoise" baseFrequency="0.3 0.05" numOctaves="2" seed="11"></feTurbulence><feColorMatrix type="matrix" values="0 0 0 0 0.149  0 0 0 0 0.812  0 0 0 0 0.682  1 0 0 0 0"></feColorMatrix><feComponentTransfer><feFuncA type="discrete" tableValues="0 0 0 0 0 0 0 0 0 0 0 0 0 0 0 0 0 0 0 0 0 0 0 0 0 1 1 1 1 1 1 1 1 1 1 1 1 1 1 1"></feFuncA></feComponentTransfer></filter><filter id="fc3" x="657" y="395" width="290" height="155" filterUnits="userSpaceOnUse" color-interpolation-filters="sRGB"><feTurbulence type="fractalNoise" baseFrequency="0.3 0.06" numOctaves="2" seed="13"></feTurbulence><feColorMatrix type="matrix" values="0 0 0 0 0.141  0 0 0 0 0.788  0 0 0 0 0.659  1 0 0 0 0"></feColorMatrix><feComponentTransfer><feFuncA type="discrete" tableValues="0 0 0 0 0 0 0 0 0 0 0 0 0 0 0 0 0 0 0 0 0 0 0 1 1 1 1 1 1 1 1 1 1 1 1 1 1 1 1 1"></feFuncA></feComponentTransfer></filter><filter id="fc5" x="642" y="520" width="415" height="70" filterUnits="userSpaceOnUse" color-interpolation-filters="sRGB"><feTurbulence type="fractalNoise" baseFrequency="0.2 0.2" numOctaves="2" seed="19"></feTurbulence><feColorMatrix type="matrix" values="0 0 0 0 0.180  0 0 0 0 0.878  0 0 0 0 0.753  1 0 0 0 0"></feColorMatrix><feComponentTransfer><feFuncA type="discrete" tableValues="0 0 0 0 0 0 0 0 0 0 0 0 0 0 0 0 0 0 0 0 0 0 0 0 1 1 1 1 1 1 1 1 1 1 1 1 1 1 1 1"></feFuncA></feComponentTransfer></filter></defs><rect x="642" y="335" width="415" height="150" filter="url(#fd1)" opacity="1" mask="url(#mhi)"></rect><rect x="642" y="335" width="415" height="150" filter="url(#fd3)" opacity="1" mask="url(#mhi)"></rect><rect x="642" y="380" width="415" height="215" filter="url(#fd2)" opacity="1" mask="url(#mlo)"></rect><rect x="642" y="380" width="415" height="205" filter="url(#fg)" opacity="1" mask="url(#mlo)"></rect><rect x="647" y="360" width="410" height="60" filter="url(#fc4)" opacity="0.6"></rect><rect x="642" y="380" width="415" height="215" filter="url(#fc2)" opacity="1" mask="url(#mlo)"></rect><rect x="657" y="395" width="290" height="155" filter="url(#fc3)" opacity="1" mask="url(#mdt)"></rect><rect x="642" y="520" width="415" height="70" filter="url(#fc5)" opacity="1"></rect><path d="M727 367 C735 420 725 480 739 525 L777 592" stroke="#2c2e30" stroke-width="5" fill="none"></path></g><polygon points="777.0,340.0 957.0,342.0 947.0,356.0 787.0,358.0" fill="#333537" opacity="0.75"></polygon><polygon points="795.0,561.0 860.0,574.0 964.0,579.0 1054.0,579.0 1054.0,592.0 777.0,592.0" fill="#2f3133"></polygon><rect x="460.0" y="548.5" width="20" height="8" fill="#2ee6c6"></rect><rect x="522.0" y="536.0" width="18" height="10" fill="#2ee6c6"></rect><rect x="447.0" y="540.0" width="14" height="4" fill="#2ee6c6"></rect><rect x="556.0" y="532.5" width="9" height="6" fill="#2ee6c6"></rect><rect x="620.6" y="530.0" width="34" height="5" fill="#2ee6c6"></rect><rect x="606.5" y="551.0" width="13" height="4" fill="#2ee6c6"></rect><rect x="580.0" y="531.6" width="8" height="16" fill="#2ee6c6"></rect><rect x="664.7" y="560.6" width="25" height="12" fill="#2ee6c6"></rect><rect x="640.0" y="580.0" width="28" height="6" fill="#2ee6c6"></rect><rect x="676.0" y="575.7" width="15" height="5" fill="#2ee6c6"></rect><rect x="709.7" y="513.8" width="18" height="10" fill="#2ee6c6"></rect><rect x="827.0" y="586.0" width="20" height="5" fill="#2ee6c6"></rect><rect x="927.0" y="585.0" width="25" height="6" fill="#2ee6c6"></rect><rect x="987.0" y="584.0" width="30" height="5" fill="#2ee6c6"></rect><rect x="641" y="546" width="2" height="2" fill="#9a9a9a"></rect><rect x="485" y="585" width="4" height="2" fill="#9a9a9a"></rect><rect x="645" y="547" width="3" height="2" fill="#9a9a9a"></rect><rect x="631" y="574" width="2" height="2" fill="#9a9a9a"></rect><rect x="559" y="563" width="2" height="2" fill="#9a9a9a"></rect><rect x="483" y="578" width="4" height="2" fill="#9a9a9a"></rect><rect x="489" y="577" width="2" height="2" fill="#9a9a9a"></rect><rect x="699" y="588" width="4" height="2" fill="#9a9a9a"></rect><rect x="746" y="567" width="4" height="2" fill="#9a9a9a"></rect><rect x="508" y="581" width="2" height="2" fill="#9a9a9a"></rect><rect x="657" y="558" width="3" height="2" fill="#9a9a9a"></rect><rect x="635" y="536" width="4" height="2" fill="#9a9a9a"></rect><rect x="681" y="545" width="4" height="2" fill="#9a9a9a"></rect><rect x="723" y="543" width="4" height="2" fill="#9a9a9a"></rect><rect x="723" y="561" width="2" height="2" fill="#9a9a9a"></rect><rect x="614" y="574" width="3" height="2" fill="#9a9a9a"></rect><rect x="654" y="586" width="2" height="2" fill="#9a9a9a"></rect><rect x="510" y="582" width="2" height="2" fill="#9a9a9a"></rect><rect x="501" y="576" width="4" height="2" fill="#9a9a9a"></rect><rect x="659" y="557" width="3" height="2" fill="#9a9a9a"></rect><rect x="525" y="546" width="2" height="2" fill="#9a9a9a"></rect><rect x="735" y="578" width="2" height="2" fill="#9a9a9a"></rect><rect x="514" y="585" width="4" height="2" fill="#9a9a9a"></rect><rect x="728" y="536" width="4" height="2" fill="#9a9a9a"></rect><rect x="603" y="545" width="2" height="2" fill="#9a9a9a"></rect><rect x="602" y="582" width="4" height="2" fill="#9a9a9a"></rect><rect x="690" y="561" width="3" height="2" fill="#9a9a9a"></rect><rect x="682" y="555" width="2" height="2" fill="#9a9a9a"></rect><rect x="539" y="551" width="2" height="2" fill="#9a9a9a"></rect><rect x="721" y="544" width="4" height="2" fill="#9a9a9a"></rect><rect x="643" y="589" width="3" height="2" fill="#9a9a9a"></rect><rect x="632" y="557" width="3" height="2" fill="#9a9a9a"></rect><rect x="472" y="547" width="4" height="2" fill="#9a9a9a"></rect><rect x="650" y="547" width="4" height="2" fill="#9a9a9a"></rect><rect x="740" y="565" width="2" height="2" fill="#9a9a9a"></rect><rect x="642" y="554" width="4" height="2" fill="#9a9a9a"></rect><rect x="551" y="580" width="3" height="2" fill="#9a9a9a"></rect><rect x="708" y="533" width="3" height="2" fill="#9a9a9a"></rect><rect x="467" y="583" width="3" height="2" fill="#9a9a9a"></rect><rect x="560" y="546" width="3" height="2" fill="#9a9a9a"></rect><rect x="699" y="546" width="3" height="2" fill="#9a9a9a"></rect><rect x="730" y="589" width="4" height="2" fill="#9a9a9a"></rect><rect x="494" y="555" width="2" height="2" fill="#9a9a9a"></rect><rect x="687" y="573" width="4" height="2" fill="#9a9a9a"></rect><rect x="523" y="585" width="2" height="2" fill="#9a9a9a"></rect><rect x="641" y="548" width="4" height="2" fill="#9a9a9a"></rect><rect x="535" y="582" width="3" height="2" fill="#9a9a9a"></rect><rect x="494" y="580" width="2" height="2" fill="#9a9a9a"></rect><rect x="652" y="576" width="3" height="2" fill="#9a9a9a"></rect><rect x="697" y="562" width="3" height="2" fill="#9a9a9a"></rect><rect x="734" y="534" width="3" height="2" fill="#9a9a9a"></rect><rect x="729" y="583" width="2" height="2" fill="#9a9a9a"></rect><rect x="706" y="542" width="2" height="2" fill="#9a9a9a"></rect><rect x="618" y="557" width="4" height="2" fill="#9a9a9a"></rect><rect x="634" y="562" width="3" height="2" fill="#9a9a9a"></rect></svg>
<div class="r" style="left:1625px;top:157px;width:289px;height:621px;background:#f7f7f7;border:1px solid #d9d9d9;box-sizing:border-box"></div>
<div class="r" style="left:1625px;top:157px;width:289px;height:5px;background:#d4d4d4;"></div>
<div class="t" style="left: 1632px; top: 166.3px; font-size: 15px; color: rgb(90, 90, 90); font-weight: normal; transform-origin: 0px 0px; transform: scaleX(1.028);">Export Movie</div>
<svg class="r" style="left:1865px;top:168px;" width="10" height="6" viewBox="0 0 10 6"><path d="M0 0H9L4.5 5Z" fill="#555"></path></svg>
<svg class="r" style="left:1881px;top:164px;" width="11" height="14" viewBox="0 0 11 14"><path d="M3 1H8M4 1V8M7 1V8M1.5 8.5H9.5M5.5 8.5V13" stroke="#555" stroke-width="1.3" fill="none"></path></svg>
<svg class="r" style="left:1898px;top:164px;" width="11" height="11" viewBox="0 0 11 11"><path d="M1 1L10 10M10 1L1 10" stroke="#555" stroke-width="1.4"></path></svg>
<div class="r" style="left:1626px;top:192px;width:287px;height:21px;background:#ebebeb;"></div>
<svg class="r" style="left:1632px;top:199px;" width="9" height="7" viewBox="0 0 9 7"><path d="M1 1L4.5 5L8 1" fill="none" stroke="#444" stroke-width="1.6"></path></svg>
<div class="t" style="left: 1644px; top: 198.22px; font-size: 12.5px; color: rgb(68, 68, 68); font-weight: bold; transform-origin: 0px 0px; transform: scaleX(1.0146);">Movie Export Presets</div>
<div class="r" style="left:1626px;top:214px;width:287px;height:241px;background:#fff;border:1px solid #c8c8c8;box-sizing:border-box"></div>
<div class="r" style="left:1629px;top:370px;width:87px;height:77px;background:#ebebeb;"></div>
<svg class="r" style="left:1651px;top:230px;" width="43" height="35" viewBox="0 0 43 35"><rect x="0.5" y="0.5" width="42" height="28" fill="#eaf4fb" stroke="#7fb2dd"></rect><rect x="1" y="1" width="41" height="9" fill="#d6e8f6"></rect><rect x="18" y="29" width="7" height="3" fill="#666"></rect><rect x="11" y="32" width="21" height="2.5" fill="#666"></rect><defs><pattern id="ck" width="3" height="3" patternUnits="userSpaceOnUse"><rect width="1.5" height="1.5" fill="#9cc8ea"></rect><rect x="1.5" y="1.5" width="1.5" height="1.5" fill="#9cc8ea"></rect></pattern></defs><rect x="2" y="2" width="39" height="25" fill="url(#ck)"></rect><path d="M4 21 L13 11 L18 16 L25 8 L37 21Z" fill="#5a9fd6" opacity="0.8"></path></svg>
<svg class="r" style="left:1737px;top:230px;" width="47" height="34" viewBox="0 0 47 34"><rect x="0.5" y="0.5" width="46" height="33" rx="7" fill="#d9252c"></rect><path d="M18 10 L31 17 L18 24Z" fill="#fff"></path></svg>
<svg class="r" style="left:1826px;top:225px;" width="44" height="44" viewBox="0 0 44 44"><rect width="44" height="44" rx="6" fill="#1ab7ea"></rect><path d="M7 16 C10 13 12 12 14 15 L19 32 C20 34 21 34 22 33 C26 29 31 22 30 17 C29 13 25 14 23 16 C25 9 35 7 36 15 C37 22 28 34 21 38 C17 40 15 37 14 34 L10 19 C9 17 8 18 7 18Z" fill="#fff"></path></svg>
<div class="t" style="left: 1659px; top: 278.42px; font-size: 12.5px; color: rgb(51, 51, 51); font-weight: normal; transform-origin: 0px 0px; transform: scaleX(0.9596);">Draft</div>
<div class="t" style="left: 1736px; top: 278.42px; font-size: 12.5px; color: rgb(51, 51, 51); font-weight: normal; transform-origin: 0px 0px; transform: scaleX(0.9567);">YouTube</div>
<div class="t" style="left: 1831px; top: 278.42px; font-size: 12.5px; color: rgb(51, 51, 51); font-weight: normal; transform-origin: 0px 0px; transform: scaleX(0.9654);">Vimeo</div>
<svg class="r" style="left:1648px;top:300px;" width="48" height="48" viewBox="0 0 48 48"><rect width="48" height="48" rx="6" fill="#1da1f2"></rect><path d="M38 14 C36.5 15 35 15.3 34 15.5 C35.5 14.5 36.5 13 37 11.5 C35.5 12.5 34 13 32.5 13.3 C29 9.5 22.5 12 23.5 18 C17.5 17.8 13.5 15 10 11 C8 14.5 9.5 18.5 12 20 C11 20 10 19.7 9 19.2 C9 22.5 11.5 25 14.5 25.8 C13.5 26.2 12.5 26.2 11.5 26 C12.5 29 15 30.8 18 31 C15 33.3 11.5 34.3 8 34 C24 43 39 34 38.5 18 C40 17 41 15.5 42 14Z" fill="#fff"></path></svg>
<svg class="r" style="left:1736px;top:300px;" width="48" height="48" viewBox="0 0 48 48"><defs><radialGradient id="ig" cx="0.3" cy="1.05" r="1.2"><stop offset="0" stop-color="#fdd76a"></stop><stop offset="0.25" stop-color="#f77a2e"></stop><stop offset="0.5" stop-color="#e6316b"></stop><stop offset="0.75" stop-color="#c02fa3"></stop><stop offset="1" stop-color="#5b4fd0"></stop></radialGradient></defs><rect width="48" height="48" rx="11" fill="url(#ig)"></rect><rect x="7" y="7" width="34" height="34" rx="9" fill="none" stroke="#fff" stroke-width="3.5"></rect><circle cx="24" cy="24" r="8" fill="none" stroke="#fff" stroke-width="3.5"></circle><circle cx="34.5" cy="13.5" r="2.3" fill="#fff"></circle></svg>
<svg class="r" style="left:1827px;top:307px;" width="43" height="35" viewBox="0 0 43 35"><rect x="0.5" y="0.5" width="42" height="28" fill="#eaf4fb" stroke="#7fb2dd"></rect><rect x="1" y="1" width="41" height="9" fill="#d6e8f6"></rect><rect x="18" y="29" width="7" height="3" fill="#666"></rect><rect x="11" y="32" width="21" height="2.5" fill="#666"></rect><text x="21.5" y="22" text-anchor="middle" font-family="Liberation Mono" font-weight="bold" font-size="15" fill="#4a8ccb">720</text></svg>
<div class="t" style="left: 1655px; top: 355.42px; font-size: 12.5px; color: rgb(51, 51, 51); font-weight: normal; transform-origin: 0px 0px; transform: scaleX(0.9508);">Twitter</div>
<div class="t" style="left: 1734px; top: 355.42px; font-size: 12.5px; color: rgb(51, 51, 51); font-weight: normal; transform-origin: 0px 0px; transform: scaleX(0.9354);">Instagram</div>
<div class="t" style="left: 1830px; top: 355.42px; font-size: 12.5px; color: rgb(51, 51, 51); font-weight: normal; transform-origin: 0px 0px; transform: scaleX(0.8992);">HD720</div>
<svg class="r" style="left:1651px;top:384px;" width="43" height="35" viewBox="0 0 43 35"><rect x="0.5" y="0.5" width="42" height="28" fill="#eaf4fb" stroke="#7fb2dd"></rect><rect x="1" y="1" width="41" height="9" fill="#d6e8f6"></rect><rect x="18" y="29" width="7" height="3" fill="#666"></rect><rect x="11" y="32" width="21" height="2.5" fill="#666"></rect><text x="21.5" y="21" text-anchor="middle" font-family="Liberation Mono" font-weight="bold" font-size="14" fill="#4a8ccb" letter-spacing="-1">1080</text></svg>
<svg class="r" style="left:1735px;top:379px;" width="44" height="45" viewBox="0 0 44 45"><path d="M7.5 0.5 H31 L42.5 12 V43.5 H7.5Z" fill="#f9f9f9" stroke="#888"></path><path d="M31 0.5 V12 H42.5" fill="none" stroke="#888"></path><rect x="1" y="18" width="34" height="12.5" fill="#0a79c9"></rect><text x="18" y="28.5" text-anchor="middle" font-family="Liberation Sans" font-weight="bold" font-size="10.5" fill="#fff">GIF</text></svg>
<div class="t" style="left: 1652px; top: 431.42px; font-size: 12.5px; color: rgb(51, 51, 51); font-weight: normal; transform-origin: 0px 0px; transform: scaleX(0.8937);">HD1080</div>
<div class="t" style="left: 1752px; top: 431.42px; font-size: 12.5px; color: rgb(51, 51, 51); font-weight: normal; transform-origin: 0px 0px; transform: scaleX(0.8156);">GIF</div>
<div class="r" style="left:1626px;top:459px;width:287px;height:1px;background:#d0d0d0;"></div>
<svg class="r" style="left:1635px;top:467px;" width="16" height="16" viewBox="0 0 16 16"><rect x="0.5" y="0.5" width="14" height="14" fill="#fff" stroke="#888"></rect><path d="M3.5 7.5 L6.5 11 L12 3" fill="none" stroke="#555" stroke-width="1.4"></path></svg>
<div class="r" style="left:1654px;top:466px;width:249px;height:18px;overflow:hidden">
<div class="t" style="left: 0px; top: 3.42px; font-size: 12.5px; color: rgb(51, 51, 51); transform-origin: 0px 0px; transform: scaleX(0.9642);">Automatically scale overlay size to export resolution</div>
</div>
<div class="t" style="left: 1636px; top: 492.12px; font-size: 12.5px; color: rgb(51, 51, 51); font-weight: normal; transform-origin: 0px 0px; transform: scaleX(0.9303);">File Name</div>
<div class="r" style="left:1636px;top:507px;width:245px;height:21px;background:#fff;border:1px solid #aaa;box-sizing:border-box"></div>
<div class="r" style="left:1641px;top:509px;width:238px;height:17px;overflow:hidden">
<div class="t" style="left: 0px; top: 2.12px; font-size: 12.5px; color: rgb(51, 51, 51); transform-origin: 0px 0px; transform: scaleX(0.9127);">S:\2_SA8905_Cartography_GeoVisualization\GIFs</div>
</div>
<svg class="r" style="left:1885px;top:508px;" width="18" height="18" viewBox="0 0 18 18"><path d="M1 6 H6 L7.5 8 H15 V16 H1Z" fill="#d9b84a" stroke="#8a6d1e" stroke-width="0.8"></path><path d="M3 10 H17 L15 16 H1Z" fill="#f2d46a" stroke="#8a6d1e" stroke-width="0.8"></path><path d="M10 6 C11 3 13 2 15 2" stroke="#1a6fbf" stroke-width="1.5" fill="none"></path><path d="M14 0 L17 2 L14 4Z" fill="#1a6fbf"></path></svg>
<div class="r" style="left:1626px;top:538px;width:287px;height:20px;background:#ebebeb;"></div>
<svg class="r" style="left:1631px;top:545px;" width="7" height="9" viewBox="0 0 7 9"><path d="M1 1L5 4.5L1 8" fill="none" stroke="#444" stroke-width="1.6"></path></svg>
<div class="t" style="left: 1644px; top: 544.12px; font-size: 12.5px; color: rgb(68, 68, 68); font-weight: bold; transform-origin: 0px 0px; transform: scaleX(0.9967);">File Export Settings</div>
<div class="r" style="left:1626px;top:568px;width:287px;height:20px;background:#ebebeb;"></div>
<svg class="r" style="left:1631px;top:575px;" width="7" height="9" viewBox="0 0 7 9"><path d="M1 1L5 4.5L1 8" fill="none" stroke="#444" stroke-width="1.6"></path></svg>
<div class="t" style="left: 1644px; top: 573.72px; font-size: 12.5px; color: rgb(68, 68, 68); font-weight: bold; transform-origin: 0px 0px; transform: scaleX(1.0129);">Advanced Movie Export Settings</div>
<div class="r" style="left:1827px;top:598px;width:81px;height:24px;background:#fff;border:1px solid #333;box-sizing:border-box"></div>
<div class="t" style="left: 1838px; top: 604.62px; font-size: 12.5px; color: rgb(51, 51, 51); font-weight: normal; transform-origin: 0px 0px; transform: scaleX(0.8665);">Save Preset</div>
<div class="r" style="left:1838px;top:748px;width:70px;height:24px;background:#fff;border:1px solid #333;box-sizing:border-box"></div>
<div class="t" style="left: 1855px; top: 754.92px; font-size: 12.5px; color: rgb(51, 51, 51); font-weight: normal; transform-origin: 0px 0px; transform: scaleX(0.9684);">Export</div>
<div class="r" style="left:1679px;top:777px;width:80px;height:21px;background:#f9f9f9;border:1px solid #d9d9d9;border-top:none;box-sizing:border-box"></div>
<div class="t" style="left: 1632px; top: 782.42px; font-size: 12.5px; color: rgb(51, 51, 51); font-weight: normal; transform-origin: 0px 0px; transform: scaleX(0.9282);">Catalog</div>
<div class="t" style="left: 1684px; top: 782.42px; font-size: 12.5px; color: rgb(26, 111, 191); font-weight: normal; transform-origin: 0px 0px; transform: scaleX(0.9595);">Export Movie</div>
<div class="r" style="left:7px;top:805px;width:1907px;height:229px;background:#f7f7f7;border:1px solid #d9d9d9;box-sizing:border-box"></div>
<div class="r" style="left:7px;top:805px;width:1907px;height:4px;background:#1c6fc1;"></div>
<div class="t" style="left: 12.5px; top: 812.38px; font-size: 15.5px; color: rgb(43, 120, 192); font-weight: normal; transform-origin: 0px 0px; transform: scaleX(1.0239);">Animation Timeline : Animation</div>
<div class="t" style="left:1655px;width:400px;text-align:center;top:812.00px;font-size:13px;color:#555;font-weight:normal;">?</div>
<svg class="r" style="left:1865px;top:815px;" width="10" height="6" viewBox="0 0 10 6"><path d="M0 0H9L4.5 5Z" fill="#555"></path></svg>
<svg class="r" style="left:1882px;top:811px;" width="11" height="14" viewBox="0 0 11 14"><path d="M3 1H8M4 1V8M7 1V8M1.5 8.5H9.5M5.5 8.5V13" stroke="#555" stroke-width="1.3" fill="none"></path></svg>
<svg class="r" style="left:1898px;top:812px;" width="11" height="11" viewBox="0 0 11 11"><path d="M1 1L10 10M10 1L1 10" stroke="#555" stroke-width="1.4"></path></svg>
<div class="r" style="left:7px;top:859px;width:35px;height:23px;background:#fff;border:1.5px solid #333;box-sizing:border-box"></div>
<div class="t" style="left: 11px; top: 865.34px; font-size: 12px; color: rgb(85, 85, 85); font-weight: normal; transform-origin: 0px 0px; transform: scaleX(0.867);">x1</div>
<svg class="r" style="left:31px;top:862px;" width="9" height="18" viewBox="0 0 9 18"><path d="M0.5 6 L4.5 1 L8.5 6Z" fill="#222"></path><path d="M0.5 11 L4.5 16 L8.5 11Z" fill="#bbb"></path></svg>
<svg class="r" style="left:45px;top:859px;overflow:visible" width="1869" height="23" viewBox="0 0 1869 23"><rect x="0.75" y="0.75" width="1867.5" height="21.5" fill="#fff" stroke="#333" stroke-width="1.5"></rect><rect x="8.5" y="5.5" width="1851.0" height="11.5" fill="#c5e1f5"></rect><path d="M8.5 5.5 H1859.5 M8.5 17 H1859.5" stroke="#333" stroke-width="1.5"></path><path d="M8.5 0 V5" stroke="#555" stroke-width="1"></path><path d="M105.9 -6 V5" stroke="#555" stroke-width="1"></path><path d="M203.3 0 V5" stroke="#555" stroke-width="1"></path><path d="M300.8 -6 V5" stroke="#555" stroke-width="1"></path><path d="M398.2 0 V5" stroke="#555" stroke-width="1"></path><path d="M495.6 -6 V5" stroke="#555" stroke-width="1"></path><path d="M593.0 0 V5" stroke="#555" stroke-width="1"></path><path d="M690.4 -6 V5" stroke="#555" stroke-width="1"></path><path d="M787.9 0 V5" stroke="#555" stroke-width="1"></path><path d="M885.3 -6 V5" stroke="#555" stroke-width="1"></path><path d="M982.7 0 V5" stroke="#555" stroke-width="1"></path><path d="M1080.1 -6 V5" stroke="#555" stroke-width="1"></path><path d="M1177.5 0 V5" stroke="#555" stroke-width="1"></path><path d="M1275.0 -6 V5" stroke="#555" stroke-width="1"></path><path d="M1372.4 0 V5" stroke="#555" stroke-width="1"></path><path d="M1469.8 -6 V5" stroke="#555" stroke-width="1"></path><path d="M1567.2 0 V5" stroke="#555" stroke-width="1"></path><path d="M1664.6 -6 V5" stroke="#555" stroke-width="1"></path><path d="M1762.1 0 V5" stroke="#555" stroke-width="1"></path><path d="M1859.5 -6 V5" stroke="#555" stroke-width="1"></path><path d="M8.5 5.5 L14.0 11 L8.5 16.5 L3.0 11Z" fill="#6e6e6e" stroke="#333" stroke-width="1"></path><path d="M105.9 5.5 L111.4 11 L105.9 16.5 L100.4 11Z" fill="#6e6e6e" stroke="#333" stroke-width="1"></path><path d="M203.3 5.5 L208.8 11 L203.3 16.5 L197.8 11Z" fill="#6e6e6e" stroke="#333" stroke-width="1"></path><path d="M300.8 5.5 L306.3 11 L300.8 16.5 L295.3 11Z" fill="#6e6e6e" stroke="#333" stroke-width="1"></path><path d="M398.2 5.5 L403.7 11 L398.2 16.5 L392.7 11Z" fill="#6e6e6e" stroke="#333" stroke-width="1"></path><path d="M495.6 5.5 L501.1 11 L495.6 16.5 L490.1 11Z" fill="#6e6e6e" stroke="#333" stroke-width="1"></path><path d="M593.0 5.5 L598.5 11 L593.0 16.5 L587.5 11Z" fill="#1a1a1a" stroke="#18d8e0" stroke-width="1.3"></path><path d="M690.4 5.5 L695.9 11 L690.4 16.5 L684.9 11Z" fill="#6e6e6e" stroke="#333" stroke-width="1"></path><path d="M787.9 5.5 L793.4 11 L787.9 16.5 L782.4 11Z" fill="#6e6e6e" stroke="#333" stroke-width="1"></path><path d="M885.3 5.5 L890.8 11 L885.3 16.5 L879.8 11Z" fill="#6e6e6e" stroke="#333" stroke-width="1"></path><path d="M982.7 5.5 L988.2 11 L982.7 16.5 L977.2 11Z" fill="#6e6e6e" stroke="#333" stroke-width="1"></path><path d="M1080.1 5.5 L1085.6 11 L1080.1 16.5 L1074.6 11Z" fill="#6e6e6e" stroke="#333" stroke-width="1"></path><path d="M1177.5 5.5 L1183.0 11 L1177.5 16.5 L1172.0 11Z" fill="#6e6e6e" stroke="#333" stroke-width="1"></path><path d="M1275.0 5.5 L1280.5 11 L1275.0 16.5 L1269.5 11Z" fill="#6e6e6e" stroke="#333" stroke-width="1"></path><path d="M1372.4 5.5 L1377.9 11 L1372.4 16.5 L1366.9 11Z" fill="#6e6e6e" stroke="#333" stroke-width="1"></path><path d="M1469.8 5.5 L1475.3 11 L1469.8 16.5 L1464.3 11Z" fill="#6e6e6e" stroke="#333" stroke-width="1"></path><path d="M1567.2 5.5 L1572.7 11 L1567.2 16.5 L1561.7 11Z" fill="#6e6e6e" stroke="#333" stroke-width="1"></path><path d="M1664.6 5.5 L1670.1 11 L1664.6 16.5 L1659.1 11Z" fill="#6e6e6e" stroke="#333" stroke-width="1"></path><path d="M1762.1 5.5 L1767.6 11 L1762.1 16.5 L1756.6 11Z" fill="#6e6e6e" stroke="#333" stroke-width="1"></path><path d="M1859.5 5.5 L1865.0 11 L1859.5 16.5 L1854.0 11Z" fill="#6e6e6e" stroke="#333" stroke-width="1"></path><rect x="769.2" y="-9" width="3" height="31" fill="#e8501c"></rect></svg>
<div class="t" style="left:-146.5px;width:400px;text-align:center;top:847.27px;font-size:11.5px;color:#444;font-weight:normal;">0s</div>
<div class="t" style="left:48.34px;width:400px;text-align:center;top:847.27px;font-size:11.5px;color:#444;font-weight:normal;">6s</div>
<div class="t" style="left:243.18px;width:400px;text-align:center;top:847.27px;font-size:11.5px;color:#444;font-weight:normal;">12s</div>
<div class="t" style="left:438.02px;width:400px;text-align:center;top:847.27px;font-size:11.5px;color:#444;font-weight:normal;">18s</div>
<div class="t" style="left:632.86px;width:400px;text-align:center;top:847.27px;font-size:11.5px;color:#444;font-weight:normal;">24s</div>
<div class="t" style="left:827.7px;width:400px;text-align:center;top:847.27px;font-size:11.5px;color:#444;font-weight:normal;">30s</div>
<div class="t" style="left:1022.54px;width:400px;text-align:center;top:847.27px;font-size:11.5px;color:#444;font-weight:normal;">36s</div>
<div class="t" style="left:1217.38px;width:400px;text-align:center;top:847.27px;font-size:11.5px;color:#444;font-weight:normal;">42s</div>
<div class="t" style="left:1412.22px;width:400px;text-align:center;top:847.27px;font-size:11.5px;color:#444;font-weight:normal;">48s</div>
<div class="t" style="left:1607.06px;width:400px;text-align:center;top:847.27px;font-size:11.5px;color:#444;font-weight:normal;">54s</div>
<div class="r" style="left:7px;top:885px;width:1101px;height:31px;background:#f7f7f7;border:1px solid #e3e3e3;box-sizing:border-box"></div>
<div class="r" style="left:116px;top:886px;width:1px;height:29px;background:#e3e3e3;"></div>
<div class="r" style="left:475px;top:886px;width:1px;height:29px;background:#e3e3e3;"></div>
<div class="r" style="left:618px;top:886px;width:1px;height:29px;background:#e3e3e3;"></div>
<div class="r" style="left:808px;top:886px;width:1px;height:29px;background:#e3e3e3;"></div>
<div class="r" style="left:967px;top:886px;width:1px;height:29px;background:#e3e3e3;"></div>
<div class="t" style="left: 13.5px; top: 895.42px; font-size: 12.5px; color: rgb(68, 68, 68); font-weight: normal; transform-origin: 0px 0px; transform: scaleX(0.8795);">Edit:</div>
<svg class="r" style="left:50px;top:891px;" width="18" height="18" viewBox="0 0 18 18"><path d="M14 4 A7 7 0 1 1 4 14" fill="none" stroke="#aaa" stroke-width="2"></path><path d="M2 4H7M4.5 1.5V6.5" stroke="#888" stroke-width="1.4"></path><circle cx="9" cy="8" r="3" fill="none" stroke="#3c9ad6" stroke-width="2"></circle><path d="M9 11V17M9 14H11" stroke="#3c9ad6" stroke-width="2"></path></svg>
<div class="t" style="left: 70.5px; top: 895.42px; font-size: 12.5px; color: rgb(68, 68, 68); font-weight: normal; transform-origin: 0px 0px; transform: scaleX(0.9115);">Insert</div>
<div class="t" style="left: 122.5px; top: 895.42px; font-size: 12.5px; color: rgb(68, 68, 68); font-weight: normal; transform-origin: 0px 0px; transform: scaleX(0.9106);">Selection:</div>
<svg class="r" style="left:182px;top:891px;" width="18" height="18" viewBox="0 0 18 18"><path d="M14 4 A7 7 0 1 0 4 14" fill="none" stroke="#aaa" stroke-width="2"></path><circle cx="9" cy="8" r="3" fill="none" stroke="#3c9ad6" stroke-width="2"></circle><path d="M9 11V17M9 14H11" stroke="#3c9ad6" stroke-width="2"></path></svg>
<div class="t" style="left: 202.5px; top: 895.42px; font-size: 12.5px; color: rgb(68, 68, 68); font-weight: normal; transform-origin: 0px 0px; transform: scaleX(0.9302);">Update</div>
<svg class="r" style="left:262px;top:895px;" width="12" height="11" viewBox="0 0 12 11"><path d="M1.5 1L10.5 10M10.5 1L1.5 10" stroke="#e0552a" stroke-width="2"></path></svg>
<div class="t" style="left: 279.5px; top: 895.42px; font-size: 12.5px; color: rgb(68, 68, 68); font-weight: normal; transform-origin: 0px 0px; transform: scaleX(0.8993);">Delete</div>
<svg class="r" style="left:336px;top:892px;" width="18" height="16" viewBox="0 0 18 16"><path d="M1 3H7M4 0V6" stroke="#666" stroke-width="1.4"></path><rect x="7" y="5" width="3" height="10" fill="#3c9ad6"></rect><rect x="13" y="5" width="3" height="10" fill="#3c9ad6"></rect></svg>
<div class="t" style="left: 356.5px; top: 895.42px; font-size: 12.5px; color: rgb(68, 68, 68); font-weight: normal; transform-origin: 0px 0px; transform: scaleX(0.9915);">Hold</div>
<svg class="r" style="left:405px;top:891px;" width="16" height="18" viewBox="0 0 16 18"><path d="M8 2 A6.5 6.5 0 1 1 4 13.5" fill="none" stroke="#aaa" stroke-width="1.6"></path><path d="M2 11 L5 16 L7 11" fill="none" stroke="#aaa" stroke-width="1.3"></path></svg>
<div class="t" style="left: 424.5px; top: 895.42px; font-size: 12.5px; color: rgb(68, 68, 68); font-weight: normal; transform-origin: 0px 0px; transform: scaleX(0.868);">Refresh</div>
<div class="t" style="left: 481px; top: 895.42px; font-size: 12.5px; color: rgb(68, 68, 68); font-weight: normal; transform-origin: 0px 0px; transform: scaleX(0.9132);">Playback:</div>
<svg class="r" style="left:539px;top:893px;" width="13" height="12" viewBox="0 0 13 12"><rect x="0.5" y="1" width="1.5" height="10" fill="#666"></rect><rect x="3" y="1" width="1.5" height="10" fill="#666"></rect><path d="M12 1V11L5 6Z" fill="#666"></path></svg>
<svg class="r" style="left:566px;top:892px;" width="13" height="16" viewBox="0 0 13 16"><path d="M1 1V15L12 8Z" fill="#666"></path></svg>
<svg class="r" style="left:592px;top:894px;" width="16" height="13" viewBox="0 0 16 13"><path d="M1 1H15V9" fill="none" stroke="#555" stroke-width="2"></path><path d="M1 1V9H4" fill="none" stroke="#555" stroke-width="2"></path><path d="M13 9H7" stroke="#555" stroke-width="2"></path><path d="M9 5L5 9L9 12" fill="none" stroke="#555" stroke-width="1.8"></path></svg>
<div class="t" style="left: 625.5px; top: 895.42px; font-size: 12.5px; color: rgb(68, 68, 68); font-weight: normal; transform-origin: 0px 0px; transform: scaleX(0.896);">Filter:</div>
<div class="r" style="left:658px;top:889px;width:70px;height:24px;background:#9fd2f2;border:1px solid #4a9fd9;box-sizing:border-box"></div>
<div class="r" style="left:732px;top:889px;width:70px;height:24px;background:#9fd2f2;border:1px solid #4a9fd9;box-sizing:border-box"></div>
<div class="r" style="left:885px;top:889px;width:76px;height:24px;background:#9fd2f2;border:1px solid #4a9fd9;box-sizing:border-box"></div>
<div class="r" style="left:1020px;top:889px;width:82px;height:24px;background:#9fd2f2;border:1px solid #4a9fd9;box-sizing:border-box"></div>
<svg class="r" style="left:663px;top:896px;" width="16" height="10" viewBox="0 0 16 10"><rect x="0.5" y="0.5" width="10" height="9" rx="1" fill="#444"></rect><path d="M10 5L15 1V9Z" fill="#444"></path></svg>
<div class="t" style="left: 682px; top: 895.42px; font-size: 12.5px; color: rgb(51, 51, 51); font-weight: normal; transform-origin: 0px 0px; transform: scaleX(0.8995);">Camera</div>
<svg class="r" style="left:743px;top:893px;" width="17" height="16" viewBox="0 0 17 16"><path d="M2 1 H14 L16 15 H1Z" fill="#e5cd4a"></path></svg>
<div class="t" style="left: 763px; top: 895.42px; font-size: 12.5px; color: rgb(51, 51, 51); font-weight: normal; transform-origin: 0px 0px; transform: scaleX(0.8951);">Layer</div>
<div class="t" style="left: 814.5px; top: 895.42px; font-size: 12.5px; color: rgb(68, 68, 68); font-weight: normal; transform-origin: 0px 0px; transform: scaleX(0.8989);">Gallery View:</div>
<div class="t" style="left: 891px; top: 895.42px; font-size: 12.5px; color: rgb(51, 51, 51); font-weight: normal; transform-origin: 0px 0px; transform: scaleX(0.903);">Compressed</div>
<div class="t" style="left: 973.5px; top: 895.42px; font-size: 12.5px; color: rgb(68, 68, 68); font-weight: normal; transform-origin: 0px 0px; transform: scaleX(0.9023);">Overlay:</div>
<svg class="r" style="left:1027px;top:892px;" width="11" height="18" viewBox="0 0 11 18"><circle cx="5.5" cy="5" r="3.5" fill="none" stroke="#4aa6e6" stroke-width="2"></circle><path d="M5.5 8.5V17M5.5 12.5H8.5M5.5 15.5H8" stroke="#4aa6e6" stroke-width="2"></path></svg>
<div class="t" style="left: 1043.5px; top: 895.42px; font-size: 12.5px; color: rgb(51, 51, 51); font-weight: normal; transform-origin: 0px 0px; transform: scaleX(0.8682);">Snap Keys</div>
<svg class="r" style="left:13px;top:926px;" width="9" height="7" viewBox="0 0 9 7"><path d="M1 1L4.5 5L8 1" fill="none" stroke="#444" stroke-width="1.6"></path></svg>
<div class="t" style="left: 25.5px; top: 926.22px; font-size: 12.5px; color: rgb(68, 68, 68); font-weight: bold; transform-origin: 0px 0px; transform: scaleX(0.9967);">Keyframe Gallery</div>
<svg class="r" style="left:13px;top:940px;" width="1900" height="70" viewBox="0 0 1900 70"><path d="M0.75 7.5 V68.5 M0 7.5 H1898 M0 68.20000000000005 H1898" stroke="#222" stroke-width="1.6" fill="none"></path><path d="M553.7 66.5 V6 H642 V66.5Z" fill="none" stroke="#16e8f0" stroke-width="4.5"></path><rect x="552" y="2" width="92" height="9" fill="#16e8f0"></rect><path d="M92 7 V24.5 M92 51.5 V68" stroke="#222" stroke-width="2"></path><circle cx="92" cy="38" r="13.3" fill="#f7f7f7" stroke="#222" stroke-width="2"></circle><path d="M84 45 C89 45 89 43 91 36 C93 30 95 29.5 99 29.5" fill="none" stroke="#777" stroke-width="1.3"></path><path d="M184 7 V24.5 M184 51.5 V68" stroke="#222" stroke-width="2"></path><circle cx="184" cy="38" r="13.3" fill="#f7f7f7" stroke="#222" stroke-width="2"></circle><path d="M176 45 C181 45 181 43 183 36 C185 30 187 29.5 191 29.5" fill="none" stroke="#777" stroke-width="1.3"></path><path d="M276 7 V24.5 M276 51.5 V68" stroke="#222" stroke-width="2"></path><circle cx="276" cy="38" r="13.3" fill="#f7f7f7" stroke="#222" stroke-width="2"></circle><path d="M268 45 C273 45 273 43 275 36 C277 30 279 29.5 283 29.5" fill="none" stroke="#777" stroke-width="1.3"></path><path d="M368 7 V24.5 M368 51.5 V68" stroke="#222" stroke-width="2"></path><circle cx="368" cy="38" r="13.3" fill="#f7f7f7" stroke="#222" stroke-width="2"></circle><path d="M360 45 C365 45 365 43 367 36 C369 30 371 29.5 375 29.5" fill="none" stroke="#777" stroke-width="1.3"></path><path d="M460 7 V24.5 M460 51.5 V68" stroke="#222" stroke-width="2"></path><circle cx="460" cy="38" r="13.3" fill="#f7f7f7" stroke="#222" stroke-width="2"></circle><path d="M452 45 C457 45 457 43 459 36 C461 30 463 29.5 467 29.5" fill="none" stroke="#777" stroke-width="1.3"></path><path d="M552 7 V24.5 M552 51.5 V68" stroke="#222" stroke-width="2"></path><circle cx="552" cy="38" r="13.3" fill="#f7f7f7" stroke="#222" stroke-width="2"></circle><path d="M552 24.5 A13.5 13.5 0 0 0 552 51.5" fill="none" stroke="#16e8f0" stroke-width="4.5"></path><path d="M544 45 C549 45 549 43 551 36 C553 30 555 29.5 559 29.5" fill="none" stroke="#777" stroke-width="1.3"></path><path d="M644 7 V24.5 M644 51.5 V68" stroke="#222" stroke-width="2"></path><circle cx="644" cy="38" r="13.3" fill="#f7f7f7" stroke="#222" stroke-width="2"></circle><path d="M644 24.5 A13.5 13.5 0 0 0 644 51.5" fill="none" stroke="#16e8f0" stroke-width="4.5"></path><path d="M636 45 C641 45 641 43 643 36 C645 30 647 29.5 651 29.5" fill="none" stroke="#777" stroke-width="1.3"></path><path d="M736 7 V24.5 M736 51.5 V68" stroke="#222" stroke-width="2"></path><circle cx="736" cy="38" r="13.3" fill="#f7f7f7" stroke="#222" stroke-width="2"></circle><path d="M728 45 C733 45 733 43 735 36 C737 30 739 29.5 743 29.5" fill="none" stroke="#777" stroke-width="1.3"></path><path d="M828 7 V24.5 M828 51.5 V68" stroke="#222" stroke-width="2"></path><circle cx="828" cy="38" r="13.3" fill="#f7f7f7" stroke="#222" stroke-width="2"></circle><path d="M820 45 C825 45 825 43 827 36 C829 30 831 29.5 835 29.5" fill="none" stroke="#777" stroke-width="1.3"></path><path d="M920 7 V24.5 M920 51.5 V68" stroke="#222" stroke-width="2"></path><circle cx="920" cy="38" r="13.3" fill="#f7f7f7" stroke="#222" stroke-width="2"></circle><path d="M912 45 C917 45 917 43 919 36 C921 30 923 29.5 927 29.5" fill="none" stroke="#777" stroke-width="1.3"></path><path d="M1012 7 V24.5 M1012 51.5 V68" stroke="#222" stroke-width="2"></path><circle cx="1012" cy="38" r="13.3" fill="#f7f7f7" stroke="#222" stroke-width="2"></circle><path d="M1004 45 C1009 45 1009 43 1011 36 C1013 30 1015 29.5 1019 29.5" fill="none" stroke="#777" stroke-width="1.3"></path><path d="M1104 7 V24.5 M1104 51.5 V68" stroke="#222" stroke-width="2"></path><circle cx="1104" cy="38" r="13.3" fill="#f7f7f7" stroke="#222" stroke-width="2"></circle><path d="M1096 45 C1101 45 1101 43 1103 36 C1105 30 1107 29.5 1111 29.5" fill="none" stroke="#777" stroke-width="1.3"></path><path d="M1196 7 V24.5 M1196 51.5 V68" stroke="#222" stroke-width="2"></path><circle cx="1196" cy="38" r="13.3" fill="#f7f7f7" stroke="#222" stroke-width="2"></circle><path d="M1188 45 C1193 45 1193 43 1195 36 C1197 30 1199 29.5 1203 29.5" fill="none" stroke="#777" stroke-width="1.3"></path><path d="M1288 7 V24.5 M1288 51.5 V68" stroke="#222" stroke-width="2"></path><circle cx="1288" cy="38" r="13.3" fill="#f7f7f7" stroke="#222" stroke-width="2"></circle><path d="M1280 45 C1285 45 1285 43 1287 36 C1289 30 1291 29.5 1295 29.5" fill="none" stroke="#777" stroke-width="1.3"></path><path d="M1380 7 V24.5 M1380 51.5 V68" stroke="#222" stroke-width="2"></path><circle cx="1380" cy="38" r="13.3" fill="#f7f7f7" stroke="#222" stroke-width="2"></circle><path d="M1372 45 C1377 45 1377 43 1379 36 C1381 30 1383 29.5 1387 29.5" fill="none" stroke="#777" stroke-width="1.3"></path><path d="M1472 7 V24.5 M1472 51.5 V68" stroke="#222" stroke-width="2"></path><circle cx="1472" cy="38" r="13.3" fill="#f7f7f7" stroke="#222" stroke-width="2"></circle><path d="M1464 45 C1469 45 1469 43 1471 36 C1473 30 1475 29.5 1479 29.5" fill="none" stroke="#777" stroke-width="1.3"></path><path d="M1564 7 V24.5 M1564 51.5 V68" stroke="#222" stroke-width="2"></path><circle cx="1564" cy="38" r="13.3" fill="#f7f7f7" stroke="#222" stroke-width="2"></circle><path d="M1556 45 C1561 45 1561 43 1563 36 C1565 30 1567 29.5 1571 29.5" fill="none" stroke="#777" stroke-width="1.3"></path><path d="M1656 7 V24.5 M1656 51.5 V68" stroke="#222" stroke-width="2"></path><circle cx="1656" cy="38" r="13.3" fill="#f7f7f7" stroke="#222" stroke-width="2"></circle><path d="M1648 45 C1653 45 1653 43 1655 36 C1657 30 1659 29.5 1663 29.5" fill="none" stroke="#777" stroke-width="1.3"></path><path d="M1748 7 V24.5 M1748 51.5 V68" stroke="#222" stroke-width="2"></path><circle cx="1748" cy="38" r="13.3" fill="#f7f7f7" stroke="#222" stroke-width="2"></circle><path d="M1740 45 C1745 45 1745 43 1747 36 C1749 30 1751 29.5 1755 29.5" fill="none" stroke="#777" stroke-width="1.3"></path><path d="M1840 7 V68" stroke="#222" stroke-width="2"></path><rect x="809.8" y="7" width="3" height="61" fill="#e8501c"></rect><path d="M1885 30 V47 M1876.5 38.5 H1893.5" stroke="#6f8fb0" stroke-width="3"></path></svg>
<div class="t" style="left:92px;width:7px;text-align:right;top:995.27px;font-size:11.5px;color:#444">1</div>
<div class="t" style="left:184px;width:7px;text-align:right;top:995.27px;font-size:11.5px;color:#444">2</div>
<div class="t" style="left:276px;width:7px;text-align:right;top:995.27px;font-size:11.5px;color:#444">3</div>
<div class="t" style="left:368px;width:7px;text-align:right;top:995.27px;font-size:11.5px;color:#444">4</div>
<div class="t" style="left:460px;width:7px;text-align:right;top:995.27px;font-size:11.5px;color:#444">5</div>
<div class="t" style="left:552px;width:7px;text-align:right;top:995.27px;font-size:11.5px;color:#444">6</div>
<div class="t" style="left:644px;width:7px;text-align:right;top:995.27px;font-size:11.5px;color:#444">7</div>
<div class="t" style="left:736px;width:7px;text-align:right;top:995.27px;font-size:11.5px;color:#444">8</div>
<div class="t" style="left:828px;width:7px;text-align:right;top:995.27px;font-size:11.5px;color:#444">9</div>
<div class="t" style="left:917px;width:13px;text-align:right;top:995.27px;font-size:11.5px;color:#444">10</div>
<div class="t" style="left:1009px;width:13px;text-align:right;top:995.27px;font-size:11.5px;color:#444">11</div>
<div class="t" style="left:1101px;width:13px;text-align:right;top:995.27px;font-size:11.5px;color:#444">12</div>
<div class="t" style="left:1193px;width:13px;text-align:right;top:995.27px;font-size:11.5px;color:#444">13</div>
<div class="t" style="left:1285px;width:13px;text-align:right;top:995.27px;font-size:11.5px;color:#444">14</div>
<div class="t" style="left:1377px;width:13px;text-align:right;top:995.27px;font-size:11.5px;color:#444">15</div>
<div class="t" style="left:1469px;width:13px;text-align:right;top:995.27px;font-size:11.5px;color:#444">16</div>
<div class="t" style="left:1561px;width:13px;text-align:right;top:995.27px;font-size:11.5px;color:#444">17</div>
<div class="t" style="left:1653px;width:13px;text-align:right;top:995.27px;font-size:11.5px;color:#444">18</div>
<div class="t" style="left:1745px;width:13px;text-align:right;top:995.27px;font-size:11.5px;color:#444">19</div>
<div class="t" style="left:1837px;width:13px;text-align:right;top:995.27px;font-size:11.5px;color:#444">20</div>
<svg class="r" style="left:10px;top:1010px;" width="9" height="10" viewBox="0 0 9 10"><path d="M8 0.5V9.5L0.5 5Z" fill="#999"></path></svg>
<div class="r" style="left:21px;top:1011px;width:1879px;height:8px;background:#dcdcdc;"></div>
<div class="r" style="left:21px;top:1011px;width:1841px;height:8px;background:#74b6e2;"></div>
<svg class="r" style="left:1902px;top:1010px;" width="9" height="10" viewBox="0 0 9 10"><path d="M0.5 0.5V9.5L8 5Z" fill="#999"></path></svg>
<div class="r" style="left:0px;top:1040px;width:1920px;height:40px;background:#0e0e10;"></div>
<svg class="r" style="left:15px;top:1051px;" width="18" height="18" viewBox="0 0 18 18"><path d="M1 3 L7.5 2 V8.3 H1Z M8.7 1.8 L17 0.6 V8.3 H8.7Z M1 9.5 H7.5 V15.8 L1 14.9Z M8.7 9.5 H17 V17.2 L8.7 16Z" fill="#fff"></path></svg>
<div class="r" style="left:48px;top:1040px;width:344px;height:40px;background:#f0f0f0;border-top:1px solid #b5b5b5;box-sizing:border-box"></div>
<svg class="r" style="left:56px;top:1048px;" width="24" height="24" viewBox="0 0 24 24"><circle cx="12" cy="12" r="9.3" fill="none" stroke="#111" stroke-width="2.8"></circle></svg>
<div class="t" style="left: 88.5px; top: 1053.88px; font-size: 15.5px; color: rgb(51, 51, 51); font-weight: normal; transform-origin: 0px 0px; transform: scaleX(0.927);">Type here to search</div>
<svg class="r" style="left:364px;top:1051px;" width="15" height="19" viewBox="0 0 15 19"><rect x="4" y="1" width="7" height="11" rx="3.5" fill="none" stroke="#444" stroke-width="1.4"></rect><path d="M1.5 8.5 C1.5 15 13.5 15 13.5 8.5 M7.5 14V17.5 M4.5 17.5H10.5" fill="none" stroke="#444" stroke-width="1.3"></path></svg>
<svg class="r" style="left:407px;top:1051px;" width="18" height="17" viewBox="0 0 18 17"><path d="M1 1.5H11 M1 15.5H11" stroke="#fff" stroke-width="1.5"></path><rect x="2" y="4.5" width="9" height="8" fill="none" stroke="#fff" stroke-width="1.5"></rect><rect x="14" y="1" width="2.2" height="2.5" fill="#fff"></rect><rect x="14" y="5" width="2.2" height="11" fill="#fff"></rect></svg>
<svg class="r" style="left:455px;top:1048px;" width="24" height="24" viewBox="0 0 24 24"><circle cx="12" cy="12" r="11" fill="#db4437"></circle><path d="M12 12 L1.5 15 A11 11 0 0 0 15 22.6Z" fill="#0f9d58"></path><path d="M12 12 L15 22.6 A11 11 0 0 0 22.8 9.5 L12 7Z" fill="#f4b400"></path><path d="M2 16 A11 11 0 0 0 10 22.8 L14 15Z" fill="#0f9d58"></path><circle cx="12" cy="12" r="5" fill="#fff"></circle><circle cx="12" cy="12" r="4" fill="#4285f4"></circle></svg>
<svg class="r" style="left:504px;top:1050px;" width="24" height="20" viewBox="0 0 24 20"><path d="M1 2 H9 L11 4 H23 V19 H1Z" fill="#e8c14e"></path><rect x="1" y="5" width="22" height="14" fill="#f5d872"></rect><path d="M6 19 V12 H18 V19 H15 V15 H9 V19Z" fill="#3aa0d8"></path></svg>
<svg class="r" style="left:552px;top:1049px;" width="26" height="23" viewBox="0 0 26 23"><rect x="8" y="3" width="17" height="17" fill="#fff"></rect><path d="M13 6 H22 V9 H13Z M13 11 H22 V13 H13Z M13 15 H20 V17 H13Z" fill="#d24726"></path><path d="M0 3 L14 0.5 V22.5 L0 20Z" fill="#d24726"></path><text x="3" y="16" font-family="Liberation Sans" font-weight="bold" font-size="11" fill="#fff">P</text></svg>
<svg class="r" style="left:601px;top:1049px;" width="26" height="23" viewBox="0 0 26 23"><rect x="10" y="3" width="15" height="17" fill="#fff"></rect><path d="M13 6 H22 M13 9 H22 M13 12 H22 M13 15 H22 M13 18 H22" stroke="#2b579a" stroke-width="1.3"></path><path d="M0 3 L14 0.5 V22.5 L0 20Z" fill="#2b579a"></path><text x="1.5" y="16" font-family="Liberation Sans" font-weight="bold" font-size="10" fill="#fff">W</text></svg>
<div class="r" style="left:639px;top:1040px;width:48px;height:40px;background:#3a3a3a;"></div>
<svg class="r" style="left:650px;top:1047px;" width="25" height="26" viewBox="0 0 25 26"><path d="M12.5 1 L23.5 7 V19 L12.5 25 L1.5 19 V7Z" fill="#2d7fd6"></path><circle cx="12.5" cy="13" r="7.5" fill="#fff"></circle><path d="M8 9 C10 9 11 11 10 13 C9 15 11 17 13 19 M16 7 C15 10 17 12 19 13" stroke="#2d7fd6" stroke-width="2.5" fill="none"></path></svg>
<div class="r" style="left:496px;top:1078px;width:40px;height:2px;background:#76b9ed;"></div>
<div class="r" style="left:545px;top:1078px;width:40px;height:2px;background:#76b9ed;"></div>
<div class="r" style="left:594px;top:1078px;width:40px;height:2px;background:#76b9ed;"></div>
<div class="r" style="left:639px;top:1078px;width:48px;height:2px;background:#76b9ed;"></div>
<svg class="r" style="left:1663px;top:1052px;" width="16" height="12" viewBox="0 0 16 12"><path d="M5 9 C1 9 1 3 5 3 C6 1 10 0 12 3 C16 3 16 9 12 9Z" fill="none" stroke="#ccc" stroke-width="1.5"></path><path d="M5 6 C7 3 9 3 11 6 C9 9 7 9 5 6Z" fill="none" stroke="#ccc" stroke-width="1.3"></path></svg>
<svg class="r" style="left:1687px;top:1052px;" width="14" height="15" viewBox="0 0 14 15"><path d="M1 1 H13 V9 L7 14 L1 9Z" fill="#3d8fdc" stroke="#fff" stroke-width="0.8"></path><text x="4" y="10" font-family="Liberation Sans" font-weight="bold" font-size="9" fill="#fff">5</text></svg>
<svg class="r" style="left:1710px;top:1052px;" width="16" height="15" viewBox="0 0 16 15"><ellipse cx="8" cy="8" rx="6" ry="6" fill="none" stroke="#bbb" transform="rotate(45 8 8)"></ellipse><circle cx="6" cy="9" r="2.5" fill="#ddd"></circle><path d="M3 15 L6 11" stroke="#ccc"></path></svg>
<svg class="r" style="left:1735px;top:1052px;" width="16" height="16" viewBox="0 0 16 16"><path d="M7 1 L13 3 V8 C13 12 10 14 7 15 C4 14 1 12 1 8 V3Z" fill="#fff"></path><path d="M7 1V15 M1 8H13" stroke="#111" stroke-width="1.2"></path><circle cx="12" cy="12" r="4" fill="#2aa44f"></circle><path d="M10 12 L11.5 13.5 L14 10.5" stroke="#fff" fill="none" stroke-width="1"></path></svg>
<svg class="r" style="left:1758px;top:1052px;" width="18" height="15" viewBox="0 0 18 15"><rect x="4" y="3" width="13" height="8" fill="none" stroke="#fff" stroke-width="1.2"></rect><path d="M1 1 H4 V4 H1Z M2.5 4 V14 M1 14 H14 M10 11 V14" fill="none" stroke="#fff" stroke-width="1.1"></path></svg>
<svg class="r" style="left:1782px;top:1052px;" width="17" height="15" viewBox="0 0 17 15"><path d="M1 5 H4 L8 1 V14 L4 10 H1Z" fill="none" stroke="#fff" stroke-width="1.1"></path><path d="M10 5 C11.5 6.5 11.5 8.5 10 10 M12 3 C15 5.5 15 9.5 12 12" fill="none" stroke="#ccc" stroke-width="1"></path><path d="M14 1 C18 5 18 10 14 14" fill="none" stroke="#777" stroke-width="1"></path></svg>
<div class="t" style="left:1634px;width:400px;text-align:center;top:1045.34px;font-size:12px;color:#fff;font-weight:normal;">7:04 PM</div>
<div class="t" style="left:1635px;width:400px;text-align:center;top:1062.84px;font-size:12px;color:#fff;font-weight:normal;">11/12/2018</div>
<svg class="r" style="left:1879px;top:1052px;" width="17" height="17" viewBox="0 0 17 17"><path d="M1 1 H16 V12 H10 L8 15 L6 12 H1Z" fill="#fff"></path><path d="M4 4.5H13M4 7H13M4 9.5H11" stroke="#111" stroke-width="1"></path></svg>
<div class="r" style="left:1915px;top:1040px;width:1px;height:40px;background:#555;"></div>
</body></html>
